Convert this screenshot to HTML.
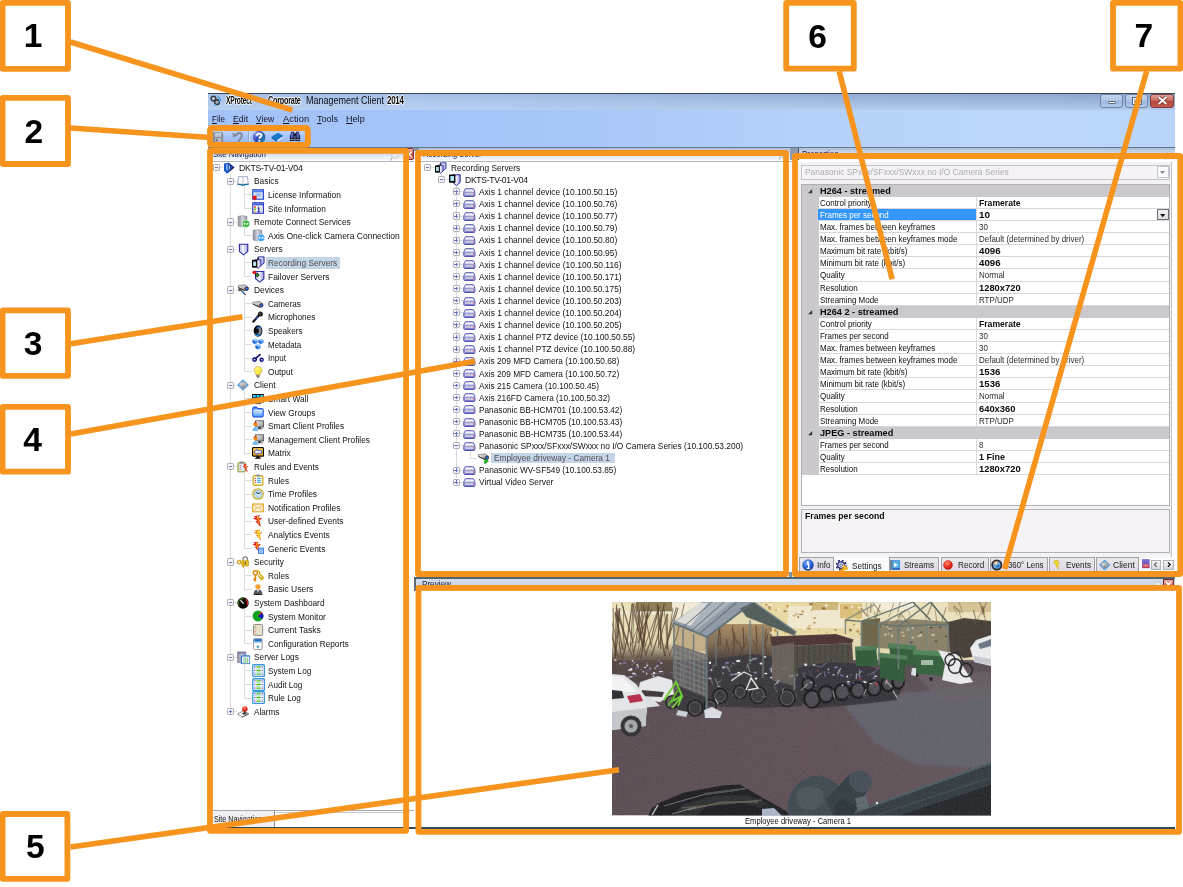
<!DOCTYPE html>
<html><head><meta charset="utf-8"><title>Management Client</title>
<style>

html,body{margin:0;padding:0;background:#fff;}
body{width:1183px;height:887px;position:relative;overflow:hidden;font-family:"Liberation Sans",sans-serif;}
.b{position:absolute;box-sizing:border-box;}
.t{position:absolute;white-space:pre;transform-origin:0 50%;font-family:"Liberation Sans",sans-serif;}
.i{position:absolute;overflow:visible;}
u{text-decoration:underline;text-underline-offset:1px;}
.sc{text-shadow:0 0 1px #fff,1px 0 0 #fff,-1px 0 0 #fff,0 1px 0 #fff,0 -1px 0 #fff;letter-spacing:-.3px}
.num{position:absolute;font:bold 33.6px "Liberation Sans",sans-serif;color:#000;line-height:34px;white-space:pre;}
#ov{position:absolute;left:0;top:0;}
</style></head>
<body>
<svg width="0" height="0" style="position:absolute"><defs><linearGradient id="gHelp" x1="0" y1=".2" x2="1" y2=".8"><stop offset="0" stop-color="#9486d8"/><stop offset=".45" stop-color="#2848c0"/><stop offset="1" stop-color="#148a9c"/></linearGradient>
<linearGradient id="gShield" x1="0" y1="0" x2="1" y2="0"><stop offset="0" stop-color="#b9b9e6"/><stop offset=".45" stop-color="#f4f4ff"/><stop offset="1" stop-color="#9c9cd8"/></linearGradient>
<linearGradient id="gSrv" x1="0" y1="0" x2="1" y2="0"><stop offset="0" stop-color="#8f8f9c"/><stop offset=".5" stop-color="#d8d8e0"/><stop offset="1" stop-color="#9a9aa6"/></linearGradient>
<radialGradient id="gBlueBall" cx=".4" cy=".3" r=".8"><stop offset="0" stop-color="#7fb2ff"/><stop offset=".6" stop-color="#1f55c8"/><stop offset="1" stop-color="#0b2f8a"/></radialGradient>
<radialGradient id="gRedBall" cx=".4" cy=".3" r=".8"><stop offset="0" stop-color="#ff8a6a"/><stop offset=".6" stop-color="#e8241a"/><stop offset="1" stop-color="#a01008"/></radialGradient>
<linearGradient id="gBulb" x1="0" y1="0" x2="1" y2="1"><stop offset="0" stop-color="#ffffa0"/><stop offset="1" stop-color="#f0d800"/></linearGradient>
<linearGradient id="gFolder" x1="0" y1="0" x2="0" y2="1"><stop offset="0" stop-color="#2a6ef0"/><stop offset=".5" stop-color="#b8dcff"/><stop offset="1" stop-color="#3a8af8"/></linearGradient>
<linearGradient id="gDev" x1="0" y1="0" x2="0" y2="1"><stop offset="0" stop-color="#fbfbff"/><stop offset="1" stop-color="#d2d2f0"/></linearGradient>
<linearGradient id="gMon" x1="0" y1="0" x2="1" y2="1"><stop offset="0" stop-color="#f4f4f4"/><stop offset="1" stop-color="#8a8a8a"/></linearGradient><symbol id="root" viewBox="0 0 12 12"><path d="M1 1.5 L6 .8 L6 10.5 L3.5 11.5 L1 8.5z" fill="#1a55d0"/><path d="M3 2.5 L4.8 2 L4.8 8.8 L3 8z" fill="#7db4ff"/><path d="M5.5 .5 L11.6 5.6 L5.5 10.6 L7.2 5.6z" fill="#0a1a50"/><path d="M6.6 2.6 L10 5.6 L6.8 8z" fill="#1c4ab8"/></symbol><symbol id="basics" viewBox="0 0 12 12"><path d="M.6 9.2 L1.6 1.6 Q4 1 6 2 Q8 1 10.4 1.6 L11.4 9.2 Q8.5 8.6 6 9.8 Q3.5 8.6 .6 9.2z" fill="#fff" stroke="#7a86b8" stroke-width=".7"/><path d="M.4 9.4 Q3.5 9 6 10.4 Q8.5 9 11.6 9.4" fill="none" stroke="#10709a" stroke-width="1.3"/><path d="M6 2 V10" stroke="#8a8ab0" stroke-width=".6"/></symbol><symbol id="license" viewBox="0 0 12 12"><rect x=".8" y=".8" width="10.6" height="9.4" fill="#e8f0ff" stroke="#2a48c8" stroke-width="1.2"/><rect x="1.4" y="1.4" width="9.4" height="2" fill="#4a7cf0"/><path d="M3.5 5.2h6M3.5 7h6" stroke="#6a90e0" stroke-width=".9"/><circle cx="2.6" cy="8.6" r="2.2" fill="#e01818"/><path d="M2 10 L2.6 11.8 L3.4 10z" fill="#c01010"/></symbol><symbol id="siteinfo" viewBox="0 0 12 12"><rect x=".8" y=".8" width="10.6" height="10.4" fill="#fff" stroke="#2a38b8" stroke-width="1.2"/><rect x="1.4" y="1.4" width="9.4" height="2" fill="#3a5ae0"/><path d="M6.4 4.6v1M5.6 6.4h1.2v3.2M5.4 9.8h2.4" stroke="#1a2a90" stroke-width="1.2" fill="none"/><circle cx="3" cy="5" r=".9" fill="#e03020"/><circle cx="3" cy="7.2" r=".9" fill="#30b030"/><circle cx="3" cy="9.4" r=".9" fill="#e8a820"/><path d="M9 4.5v6" stroke="#b8c4f0" stroke-width="1.2"/></symbol><symbol id="remote" viewBox="0 0 12 12"><path d="M1 1.2 Q5 .2 9 1.2 V10 Q5 11.4 1 10z" fill="url(#gSrv)" stroke="#7a7a88" stroke-width=".5"/><path d="M3.4 1.2V10.4M6.6 1.2V10.4" stroke="#a8a8b4" stroke-width=".5"/><circle cx="8.2" cy="8" r="3.4" fill="#36b43a" stroke="#e8ffe8" stroke-width=".6"/><path d="M5.8 8 l1.8 -1.3 v2.6z M10.6 8 l-1.8 -1.3 v2.6z" fill="#fff"/></symbol><symbol id="axisone" viewBox="0 0 12 12"><path d="M1 1.2 Q5 .2 9 1.2 V10 Q5 11.4 1 10z" fill="url(#gSrv)" stroke="#7a7a88" stroke-width=".5"/><path d="M3.4 1.2V10.4M6.6 1.2V10.4" stroke="#a8a8b4" stroke-width=".5"/><circle cx="8.2" cy="8" r="3.4" fill="#3aa0f0" stroke="#e8f4ff" stroke-width=".6"/><circle cx="6.9" cy="8" r=".9" fill="#fff"/><circle cx="9.5" cy="8" r=".9" fill="#fff"/></symbol><symbol id="servers" viewBox="0 0 12 12"><path d="M2.2 1.2 h7.6 v6.6 l-3.8 3 l-3.8 -3 z" fill="url(#gShield)" stroke="#2c2ca0" stroke-width="1"/></symbol><symbol id="recsrv" viewBox="0 0 12 12"><path d="M5.6 .8 h5.4 v5.6 l-2.7 2.2 l-2.7 -2.2z" fill="url(#gShield)" stroke="#2c2ca0" stroke-width=".9"/><path d="M3 3.4 h5.2 v5.4 l-2.6 2.4 l-2.6 -2.4z" fill="url(#gShield)" stroke="#2c2ca0" stroke-width=".9"/><rect x=".5" y="4.2" width="3.8" height="5.6" fill="#b8e4f8" stroke="#080808" stroke-width="1.1"/><path d="M.5 4.2h3.8M.5 9.8h3.8" stroke="#080808" stroke-width="1.4"/><rect x="4.6" y="1.6" width="1.6" height="1.6" fill="#222"/></symbol><symbol id="failover" viewBox="0 0 12 12"><path d="M3.2 1.4 h7.6 v6.6 l-3.8 3 l-3.8 -3 z" fill="url(#gShield)" stroke="#2c2ca0" stroke-width="1"/><path d="M2 .2 L4.2 2.2 L2 4.2 L-.2 2.2z" fill="#e81818"/><path d="M4.8 2.6 L7 4.6 L4.8 6.6 L2.6 4.6z" fill="#111"/><path d="M4.8 3.5 L6 4.6 L4.8 5.7 L3.6 4.6z" fill="#20d020"/></symbol><symbol id="cameras" viewBox="0 0 12 12"><g transform="translate(0,2.2)"><path d="M.6 2.2 L7.2 1.2 L11 3.6 L10.2 6.4 L7.6 7 L1 4z" fill="url(#gMon)" stroke="#55555c" stroke-width=".6"/><path d="M1 4 L7.6 7" stroke="#333" stroke-width="1"/><circle cx="9.3" cy="5.2" r="1.7" fill="#2a6ae0" stroke="#222" stroke-width=".7"/><circle cx="7" cy="5.6" r=".6" fill="#e03030"/></g></symbol><symbol id="devices" viewBox="0 0 12 12"><g transform="translate(.4,-.4)"><path d="M.6 2.2 L7.2 1.2 L11 3.6 L10.2 6.4 L7.6 7 L1 4z" fill="url(#gMon)" stroke="#55555c" stroke-width=".6"/><path d="M1 4 L7.6 7" stroke="#333" stroke-width="1"/><circle cx="9.3" cy="5.2" r="1.7" fill="#2a6ae0" stroke="#222" stroke-width=".7"/><circle cx="7" cy="5.6" r=".6" fill="#e03030"/></g><path d="M3 5 L8.6 11" stroke="#5a5a60" stroke-width="1.6"/><path d="M5 7.2 L7 9.4" stroke="#2a8ad8" stroke-width="1.4"/><circle cx="2.6" cy="5.6" r="1.6" fill="#555"/></symbol><symbol id="mic" viewBox="0 0 12 12"><path d="M1.4 10.6 L7.6 3.6" stroke="#111" stroke-width="2.2" stroke-linecap="round"/><path d="M3.6 8.2 L5.6 6" stroke="#2a4ad0" stroke-width="1.4"/><circle cx="8.4" cy="3" r="2.5" fill="#1a1a1a"/><circle cx="8" cy="2.6" r=".8" fill="#777"/></symbol><symbol id="speakers" viewBox="0 0 12 12"><ellipse cx="6" cy="6" rx="4.4" ry="5.8" fill="#0c0c10"/><ellipse cx="6.8" cy="6" rx="2.6" ry="4.4" fill="#1a6ad8"/><ellipse cx="7.6" cy="6" rx="1.8" ry="3.6" fill="#88888c"/><ellipse cx="5.4" cy="6" rx="1.5" ry="2.4" fill="#0a0a0a"/><path d="M2 8.4 Q4 11 7 11" stroke="#30c0f0" stroke-width="1" fill="none"/></symbol><symbol id="metadata" viewBox="0 0 12 12"><g transform="translate(.4,.4)"><path d="M0 1.3 L2.6 0 L5.2 1.3 L2.6 2.6z" fill="#9cd0ff"/><path d="M0 1.3 L2.6 2.6 V5.8 L0 4.4z" fill="#1e66d0"/><path d="M5.2 1.3 L2.6 2.6 V5.8 L5.2 4.4z" fill="#4a94ec"/></g><g transform="translate(6.4,.4)"><path d="M0 1.3 L2.6 0 L5.2 1.3 L2.6 2.6z" fill="#9cd0ff"/><path d="M0 1.3 L2.6 2.6 V5.8 L0 4.4z" fill="#1e66d0"/><path d="M5.2 1.3 L2.6 2.6 V5.8 L5.2 4.4z" fill="#4a94ec"/></g><g transform="translate(3.4,5.8)"><path d="M0 1.3 L2.6 0 L5.2 1.3 L2.6 2.6z" fill="#9cd0ff"/><path d="M0 1.3 L2.6 2.6 V5.8 L0 4.4z" fill="#1e66d0"/><path d="M5.2 1.3 L2.6 2.6 V5.8 L5.2 4.4z" fill="#4a94ec"/></g></symbol><symbol id="input" viewBox="0 0 12 12"><circle cx="2.6" cy="7.6" r="1.7" fill="none" stroke="#0a0a78" stroke-width="1.5"/><circle cx="9.6" cy="7.8" r="1.5" fill="none" stroke="#0a0a78" stroke-width="1.4"/><path d="M3.4 6.6 L8 2.6" stroke="#0a0a78" stroke-width="1.6" stroke-linecap="round"/></symbol><symbol id="output" viewBox="0 0 12 12"><path d="M6 .6 C2.8 .6 1.6 3 2.2 5 C2.8 6.6 3.8 7.2 4 8.8 H8 C8.2 7.2 9.2 6.6 9.8 5 C10.4 3 9.2 .6 6 .6z" fill="url(#gBulb)" stroke="#c8a868" stroke-width=".7"/><path d="M4.2 9.4h3.6M4.5 10.5h3" stroke="#6a6a6a" stroke-width=".9"/><path d="M5.2 11.4h1.6" stroke="#444" stroke-width=".8"/></symbol><symbol id="client" viewBox="0 0 12 12"><path d="M6 .2 L11.8 6 L6 11.8 L.2 6z" fill="#4a98e0"/><path d="M6 1.6 L10.4 6 L6 10.4 L1.6 6z" fill="#8cc4f4"/><rect x="2.8" y="3.4" width="6.4" height="4.2" rx=".6" fill="url(#gMon)" stroke="#8a8a90" stroke-width=".5"/><path d="M5.2 7.6h1.6v1.2h-1.6z" fill="#b06a5a"/><path d="M4 9h4" stroke="#888" stroke-width=".8"/></symbol><symbol id="smartwall" viewBox="0 0 12 12"><rect x=".2" y="1" width="11.6" height="8.6" fill="#0a0a0a"/><path d="M1 2h2.8v2.4H1zM4.6 2h2.8v2.4H4.6zM8.2 2H11v2.4H8.2zM1 5.4h2.8v2.6H1zM4.6 5.4h2.8v2.6H4.6zM8.2 5.4H11v2.6H8.2z" fill="#30c8f8"/><path d="M3 10.6h6" stroke="#444" stroke-width="1"/></symbol><symbol id="viewgroups" viewBox="0 0 12 12"><path d="M.8 2.4 Q.8 1 2.2 1 H4.6 L5.8 2.6 H10.4 Q11.2 2.6 11.2 3.6 V10 Q11.2 11 10.2 11 H1.8 Q.8 11 .8 10z" fill="url(#gFolder)" stroke="#1a44d8" stroke-width="1"/><path d="M1.6 5 Q4 3.2 6.4 4.4 L10.4 4.4" stroke="#fff" stroke-width=".9" fill="none"/></symbol><symbol id="profile" viewBox="0 0 12 12"><rect x="3.6" y=".8" width="8" height="6.2" fill="url(#gMon)" stroke="#4a4a4a" stroke-width=".8"/><path d="M6.4 7h2.4v1.4h2v.9H5.6z" fill="#3a3a3a"/><circle cx="3.4" cy="4.4" r="2.1" fill="#f08a20"/><path d="M2 2.8 Q3.4 1.2 5 2.8 L4.4 3.6 H2.4z" fill="#c84a10"/><path d="M.4 11 Q.4 7 3.4 7 Q6.4 7 6.4 11z" fill="#6ab4f0" stroke="#d8ecff" stroke-width=".5"/></symbol><symbol id="matrix" viewBox="0 0 12 12"><rect x=".5" y=".6" width="11" height="8.6" rx="1" fill="#f0a820" stroke="#0a0a0a" stroke-width="1.2"/><rect x="1.2" y="1.2" width="9.6" height="3" fill="#f8d060" opacity=".8"/><path d="M2 4.9 L5.2 2.2 V3.6 H9.6 V6.2 H5.2 V7.6z" fill="#fff" stroke="#2a48d0" stroke-width=".8"/><path d="M2.6 11.8 L5 9.4 H7 L9.4 11.8z" fill="#0a0a0a"/><path d="M6.6 11.8 l1 -1.4 l1 1.4z" fill="#e02020"/></symbol><symbol id="rulesevents" viewBox="0 0 12 12"><rect x=".8" y="1.6" width="7.8" height="9.4" rx=".8" fill="#b8b860" stroke="#8a9a40" stroke-width=".7"/><rect x="1.8" y="2.6" width="5.8" height="7.4" fill="#d8ecf8"/><rect x="3" y=".6" width="3.4" height="1.8" rx=".5" fill="#8888a0"/><path d="M3.2 4v5" stroke="#e04040" stroke-width="1" stroke-dasharray="1 .8"/><path d="M6.2 2.8 L9.8 3.6 L8.6 5 L11.4 5.6 L9.4 7 L11 11.4 L7.4 7.6 L8.8 7 L5.6 5.4 L7.4 4.6z" fill="#e82818"/><path d="M8 4.6 L9.6 6.6 L9 7.4" stroke="#ffb020" stroke-width=".8" fill="none"/></symbol><symbol id="rules" viewBox="0 0 12 12"><rect x="1" y="1.6" width="10" height="9.8" rx="1" fill="#e8d040" stroke="#b8a020" stroke-width=".8"/><rect x="2.2" y="2.8" width="7.6" height="7.4" fill="#fff"/><rect x="4.2" y=".4" width="3.6" height="2" rx=".6" fill="#9090a8"/><path d="M3.4 4v5.4" stroke="#e03030" stroke-width="1.1" stroke-dasharray="1.1 .9"/><path d="M5.2 4.4h3.6M5.2 6.4h3.6M5.2 8.4h3.6" stroke="#40a8e0" stroke-width="1.1"/></symbol><symbol id="time" viewBox="0 0 12 12"><circle cx="6" cy="6" r="5.2" fill="#b8dcf8" stroke="#c8a820" stroke-width="1.3"/><circle cx="6" cy="6" r="4.4" fill="none" stroke="#f0e080" stroke-width=".5"/><path d="M6 6 L4 3.6 M6 6 L8.4 4.6" stroke="#222" stroke-width=".9"/><path d="M6 2v.8M6 9.2v.8M2 6h.8M9.2 6h.8" stroke="#4060c0" stroke-width=".7"/><path d="M6 6 L6.8 8.6" stroke="#fff" stroke-width=".8"/></symbol><symbol id="notif" viewBox="0 0 12 12"><rect x=".6" y="2" width="10.8" height="7.8" fill="#fdf0d0" stroke="#e0a830" stroke-width="1.1"/><path d="M.8 2.2 L6 6.4 L11.2 2.2 M.8 9.6 L4.4 5.6 M11.2 9.6 L7.6 5.6" stroke="#e8b040" stroke-width=".9" fill="none"/></symbol><symbol id="userevents" viewBox="0 0 12 12"><path d="M1.6 1.2 L8 .2 L6.4 2.9 L10.2 3.1 L7.4 5.6 L8.8 12 L3.4 6.2 L5.6 5.3 L.8 3.5 L3.8 2.6z" fill="#d81010"/><path d="M4.6 1.8 L6.2 1.6 L5 3.6 L7.4 4 L5.8 5.4 L7 8.6" stroke="#ffc820" stroke-width="1" fill="none"/></symbol><symbol id="analytics" viewBox="0 0 12 12"><g transform="translate(.8,.4) scale(.95)"><path d="M1.6 1.2 L8 .2 L6.4 2.9 L10.2 3.1 L7.4 5.6 L8.8 12 L3.4 6.2 L5.6 5.3 L.8 3.5 L3.8 2.6z" fill="#f08010"/><path d="M4.6 1.8 L6.2 1.6 L5 3.6 L7.4 4 L5.8 5.4 L7 9.4" stroke="#ffe040" stroke-width="1.3" fill="none"/></g></symbol><symbol id="generic" viewBox="0 0 12 12"><g transform="translate(-.4,-.6) scale(.92)"><path d="M1.6 1.2 L8 .2 L6.4 2.9 L10.2 3.1 L7.4 5.6 L8.8 12 L3.4 6.2 L5.6 5.3 L.8 3.5 L3.8 2.6z" fill="#d81010"/><path d="M4.6 1.8 L6.2 1.6 L5 3.6 L7.4 4 L5.8 5.4 L7 8.6" stroke="#ffc820" stroke-width="1" fill="none"/></g><rect x="6.6" y="6.2" width="5" height="5.6" fill="#b8dcff" stroke="#2a78e0" stroke-width="1"/><path d="M8.4 7v4M9.8 7v4" stroke="#5a9af0" stroke-width=".7"/></symbol><symbol id="security" viewBox="0 0 12 12"><path d="M6 4.6 V3.2 Q6 .8 8.2 .8 Q10.4 .8 10.4 3.2 V4.6" fill="none" stroke="#6a6a6a" stroke-width="1.1"/><path d="M6.6 4.6 V3.4 Q6.6 1.8 8.2 1.8 Q9.8 1.8 9.8 3.4 V4.6" fill="none" stroke="#d8d8d8" stroke-width=".6"/><rect x="4.8" y="4.4" width="6.8" height="5.6" rx=".6" fill="#e8c020" stroke="#b89010" stroke-width=".6"/><rect x="7.8" y="5.8" width="1" height="2.6" fill="#4a4a80"/><circle cx="2.2" cy="6.2" r="1.7" fill="none" stroke="#d8a810" stroke-width="1.3"/><path d="M3.8 6.4 H7.4 M6 6.4 V8.4 M7 6.4 V9.6" stroke="#d8a810" stroke-width="1.2"/><path d="M5.6 10 L6.8 11.6" stroke="#c89810" stroke-width="1.2"/></symbol><symbol id="roles" viewBox="0 0 12 12"><circle cx="3.4" cy="2.8" r="2.1" fill="none" stroke="#e08a10" stroke-width="1.5"/><path d="M3.4 4.8 V11.4 M3.4 8.6 H1.6 M3.4 10.4 H1.8" stroke="#e08a10" stroke-width="1.6"/><path d="M5 1.2 Q8 .6 7.6 3.8 L11.4 7.6 L10.6 9 L9.4 8.2 L9 9 L6.2 5.2" fill="none" stroke="#d8b020" stroke-width="1.5"/></symbol><symbol id="users" viewBox="0 0 12 12"><circle cx="6" cy="3.6" r="2.7" fill="#f8a028"/><path d="M3.6 2.6 Q6 -.4 8.4 2.6 Q6 1.6 3.6 2.6z" fill="#d0d0d0"/><path d="M1.6 11.4 Q1.6 6.4 6 6.4 Q10.4 6.4 10.4 11.4z" fill="#58585c"/><path d="M4.8 6.6 L6 9.6 L7.2 6.6z" fill="#e8e8e8"/><ellipse cx="6" cy="11.4" rx="4.6" ry=".6" fill="#222"/></symbol><symbol id="dashboard" viewBox="0 0 12 12"><circle cx="6" cy="6" r="5.7" fill="#050505"/><path d="M2 8.6 A4.4 4.4 0 0 1 6.6 1.7" fill="none" stroke="#58a018" stroke-width="1"/><path d="M8.2 2.2 A4.4 4.4 0 0 1 10 8.4" fill="none" stroke="#e01818" stroke-width="1.1"/><path d="M6.6 6.6 L3.4 3.2" stroke="#fff" stroke-width="1.2"/></symbol><symbol id="sysmon" viewBox="0 0 12 12"><circle cx="6" cy="6" r="5.4" fill="#10a020"/><path d="M6 6 L10.4 2.9 A5.4 5.4 0 0 1 10.4 9.1z" fill="#1818c0"/><path d="M6 6 L9.2 1.7 A5.4 5.4 0 0 1 10.4 2.9z" fill="#e01818"/></symbol><symbol id="tasks" viewBox="0 0 12 12"><rect x="1.6" y=".6" width="9" height="10.8" rx=".8" fill="#f4ecd8" stroke="#787878" stroke-width=".9"/><path d="M2.2 3h7.8M2.2 5h7.8M2.2 7h7.8M2.2 9h7.8M4.6 1v10M7.4 1v10" stroke="#d8ccb0" stroke-width=".5"/><path d="M3.2 2v2" stroke="#60c060" stroke-width=".9"/><path d="M3.2 5.2v5" stroke="#e86060" stroke-width=".9" stroke-dasharray=".9 .9"/></symbol><symbol id="config" viewBox="0 0 12 12"><rect x="1.6" y=".6" width="8.6" height="10.8" rx=".8" fill="#fff" stroke="#909090" stroke-width=".9"/><rect x="2.2" y="1.1" width="7.4" height="2.6" fill="#1a6ac8"/><rect x="2.2" y="3.7" width="7.4" height="1.4" fill="#a8d0f0"/><path d="M5.9 7.4v2.6M4.6 8.7h2.6" stroke="#2a7ad8" stroke-width="1"/></symbol><symbol id="serverlogs" viewBox="0 0 12 12"><path d="M.6 .8 H8 V10.4 H.6z" fill="url(#gSrv)" stroke="#6a6a8a" stroke-width=".6"/><path d="M.6 .8 H8 V2.4 H.6z" fill="#7a7aa8"/><path d="M3 .8v9.6M5.6 .8v9.6" stroke="#9a9ab0" stroke-width=".5"/><path d="M4 5.4 Q4 4.4 5 4.4 H10.8 Q11.8 4.4 11.8 5.4 V11.6 H4z" fill="#e8f0ff" stroke="#2a78d8" stroke-width="1"/><path d="M6.4 6v5.4M8 6v5.4M9.6 6v5.4" stroke="#88c888" stroke-width=".9"/></symbol><symbol id="log" viewBox="0 0 12 12"><rect x=".7" y=".7" width="10.6" height="10.6" rx=".8" fill="#fff" stroke="#3a98d8" stroke-width="1.2"/><path d="M1.2 4.2h9.6M1.2 7.6h9.6" stroke="#9ad0f0" stroke-width=".6"/><path d="M4 2.6h4M4 5.9h4M4 9.2h4" stroke="#48b818" stroke-width="1.3"/><path d="M2 2.6h1.2M8.8 2.6H10M2 5.9h1.2M8.8 5.9H10M2 9.2h1.2M8.8 9.2H10" stroke="#8848c8" stroke-width="1.1"/></symbol><symbol id="alarms" viewBox="0 0 12 12"><path d="M.4 8 L6 5 L11.6 7.4 L5 11z" fill="#f8f8f8" stroke="#6a6a6a" stroke-width=".7"/><path d="M5 11 L11.6 7.4 V8.4 L5 11.8z" fill="#555"/><ellipse cx="7.4" cy="7.4" rx="2.2" ry="1" fill="#333"/><rect x="7" y="4.6" width="1.2" height="3" fill="#222"/><circle cx="7.8" cy="3" r="2.8" fill="url(#gRedBall)"/><circle cx="7.8" cy="2.2" r=".8" fill="#f88" opacity=".8"/></symbol><symbol id="srv1" viewBox="0 0 12 12"><path d="M3.8 .8 h7.4 v7.6 l-3.7 3 l-3.7 -3z" fill="url(#gShield)" stroke="#2c2ca0" stroke-width="1"/><rect x=".7" y="1.4" width="5" height="6.4" fill="#b8e8fc" stroke="#050505" stroke-width="1.3"/><path d="M.2 1.4h6M.2 7.8h6" stroke="#050505" stroke-width="1.3"/></symbol><symbol id="device" viewBox="0 0 13 10"><path d="M2.6 .8 H10.4 Q11.4 .8 11.9 2.6 L12.6 4.8 V8 Q12.6 9.2 11.4 9.2 H1.6 Q.4 9.2 .4 8 V4.8 L1.1 2.6 Q1.6 .8 2.6 .8z" fill="url(#gDev)" stroke="#3c3ca4" stroke-width="1"/><rect x="1.4" y="4.6" width="10.2" height="3.6" rx=".6" fill="#e6e6f8" stroke="#4a4ab4" stroke-width=".7"/><path d="M2.6 6.4h6.6" stroke="#a4a4b4" stroke-width="1.2" stroke-dasharray="1.6 .5"/><circle cx="10.6" cy="6.4" r=".7" fill="#f04040"/></symbol><symbol id="camplay" viewBox="0 0 13 12"><g transform="translate(.6,.6)"><path d="M.6 2.2 L7.2 1.2 L11 3.6 L10.2 6.4 L7.6 7 L1 4z" fill="url(#gMon)" stroke="#55555c" stroke-width=".6"/><path d="M1 4 L7.6 7" stroke="#333" stroke-width="1"/><circle cx="9.3" cy="5.2" r="1.7" fill="#2a6ae0" stroke="#222" stroke-width=".7"/><circle cx="7" cy="5.6" r=".6" fill="#e03030"/></g><path d="M7.6 6.4 L11.4 9.2 L7.6 12z" fill="#18c018" stroke="#0a700a" stroke-width=".5"/></symbol><symbol id="tinfo" viewBox="0 0 12 12"><circle cx="6" cy="6" r="5.7" fill="url(#gBlueBall)"/><circle cx="6" cy="3" r="1" fill="#fff"/><path d="M4.8 5h1.9v4M4.6 9.4h3.2" stroke="#fff" stroke-width="1.3" fill="none"/></symbol><symbol id="tsettings" viewBox="0 0 12 12"><g transform="translate(-.6,-.8) scale(1.1)"><circle cx="5" cy="5.4" r="3" fill="#fff" stroke="#2c2c78" stroke-width="1.3"/><circle cx="5" cy="5.4" r="4.3" fill="none" stroke="#2c2c78" stroke-width="1.6" stroke-dasharray="1.75 1.63"/><circle cx="5" cy="5.4" r="1.2" fill="#fff" stroke="#2c2c78" stroke-width=".7"/><path d="M4.4 11 L8.6 7.6" stroke="#e8a818" stroke-width="2.4" stroke-linecap="round"/><path d="M8.2 4.8 A2.6 2.6 0 1 0 11.8 6.8 L10 7.6 L9 6.2z" fill="#f0b828"/></g></symbol><symbol id="tstreams" viewBox="0 0 12 12"><rect x=".4" y=".4" width="11.2" height="11.2" fill="#3a8ad0"/><rect x=".4" y=".4" width="2.4" height="11.2" fill="#6a7a8a"/><rect x="3" y="1" width="8" height="10" fill="#58b0e8"/><path d="M4.6 3.4 L9 6 L4.6 8.6z" fill="#fff"/><rect x="3" y="9.4" width="8.4" height="2" fill="#2a6ab8"/></symbol><symbol id="trecord" viewBox="0 0 12 12"><circle cx="6" cy="6" r="5.4" fill="url(#gRedBall)" stroke="#b02010" stroke-width=".5"/></symbol><symbol id="tlens" viewBox="0 0 12 12"><circle cx="6" cy="6" r="5.7" fill="#2a2a30"/><circle cx="6" cy="6" r="3.9" fill="#6aa8e0"/><path d="M6 6 L2.4 4.4 A3.9 3.9 0 0 1 7 2.2z" fill="#f0a040"/><path d="M6 6 L3.4 4 L6.4 3z" fill="#fff" opacity=".85"/><circle cx="7.2" cy="7.4" r="1.8" fill="#3a78c8"/></symbol><symbol id="tevents" viewBox="0 0 12 12"><path d="M2.4 .6 L8.2 .2 L6.6 3 L10 3.4 L7.2 5.6 L8.4 11.6 L4.4 6 L6 5.4 L1.6 3.2 L4 2.4z" fill="#f8e020" stroke="#c8a010" stroke-width=".6"/></symbol><symbol id="tgrid" viewBox="0 0 10 12"><rect x=".2" y=".2" width="9.6" height="11.6" fill="#5a4ac8"/><rect x=".8" y="6.4" width="8.4" height="4.8" fill="#d03a48"/><path d="M2.4 1v8M5 1v8M7.6 1v8" stroke="#fff" stroke-width=".7" stroke-dasharray="1 .8"/><path d="M3 8.6h4" stroke="#fff" stroke-width=".8"/></symbol><symbol id="save" viewBox="0 0 12 12"><path d="M.5 .5 H10.4 L11.5 1.6 V11.5 H.5z" fill="#8e9098" stroke="#74767e" stroke-width=".6"/><rect x="2.2" y=".9" width="7.4" height="4.6" fill="#c4cede"/><path d="M2.2 2.4h7.4M2.2 3.9h7.4" stroke="#aab6ca" stroke-width=".5"/><rect x="2.6" y="7.2" width="6.8" height="4.2" fill="#b9bfcc"/><rect x="3.4" y="8" width="2" height="2.8" fill="#70727c"/></symbol><symbol id="undo" viewBox="0 0 12 12"><path d="M.4 1.4 L1.2 7.2 L6.2 5z" fill="#888c98"/><path d="M3.4 4.8 Q7.6 .4 10.2 3.2 Q12 6 6.6 11.6" fill="none" stroke="#888c98" stroke-width="2.5"/></symbol><symbol id="help" viewBox="0 0 12 12"><circle cx="6" cy="6" r="5.7" fill="url(#gHelp)" stroke="#20308a" stroke-width=".5"/><ellipse cx="5.4" cy="3.4" rx="3.8" ry="2.4" fill="#fff" opacity=".28"/><path d="M3.8 4.7 Q3.8 2.5 6 2.5 Q8.3 2.5 8.3 4.4 Q8.3 5.6 6.9 6.2 Q6.1 6.6 6.1 7.5" fill="none" stroke="#fff" stroke-width="1.7"/><circle cx="6.1" cy="9.5" r="1" fill="#fff"/></symbol><symbol id="book" viewBox="0 0 14 12"><path d="M.4 5 L7.4 .8 L13.4 4.4 L6.4 9z" fill="#1878c8"/><path d="M.4 5 L6.4 9 V11 L.4 6.8z" fill="#0a58a0"/><path d="M6.4 9 L13.4 4.4 V6.4 L6.4 11z" fill="#e8f0f8" stroke="#8ab0d0" stroke-width=".4"/></symbol><symbol id="binoc" viewBox="0 0 12 12"><path d="M2 .8 H4.8 L5.6 4 V11 H.4 V6.4z" fill="#0c0c20"/><path d="M7.2 .8 H10 L11.6 6.4 V11 H6.4 V4z" fill="#0c0c20"/><rect x="4.6" y="2.6" width="2.8" height="3" fill="#15153a"/><path d="M2.9 1.6 L2 8 M9.1 1.6 L10 8" stroke="#5a62e0" stroke-width="1.5"/><path d="M3.8 1.6 L3.6 7.6 M8.2 1.6 L8.4 7.6" stroke="#a8b4ff" stroke-width=".7"/><path d="M.8 9.4h4.4M6.8 9.4h4.4" stroke="#e8ecff" stroke-width=".7"/></symbol><symbol id="gears" viewBox="0 0 12 12"><circle cx="3.8" cy="3.8" r="2.5" fill="#b8d8f0" stroke="#3a3a3a" stroke-width="1.7"/><circle cx="7.6" cy="7.8" r="2.5" fill="#b0b8c0" stroke="#3a3a3a" stroke-width="1.7"/><path d="M8.4 1.6 L11.8 5 L8.6 8 M6.6 9.8 L5.2 11.4" stroke="#3a9ae8" stroke-width="1.3" fill="none"/></symbol><symbol id="pin" viewBox="0 0 10 10"><ellipse cx="5" cy="4" rx="3.8" ry="3" fill="#e8e8ec" stroke="#b0b4bc" stroke-width=".6"/><path d="M1.6 6.4 L.2 9.6" stroke="#a0a4ac" stroke-width="1.1"/></symbol></defs></svg>
<div class="b" style="left:208.00px;top:93.00px;width:967.00px;height:54.50px;background:linear-gradient(90deg,#a4c3f8 0%,#a4c3f8 22%,#a9c7f8 40%,#b3d0fa 60%,#bcd7fb 82%,#bad5fb 100%);"></div>
<div class="b" style="left:208.00px;top:93.00px;width:967.00px;height:17.00px;background:linear-gradient(180deg,#a3bfe8 0%,#adc7ec 40%,#b9d0f0 100%);"></div>
<div class="b" style="left:408.00px;top:93.00px;width:767.00px;height:17.00px;background:linear-gradient(90deg,rgba(130,155,195,0),rgba(130,155,195,.55) 60%,rgba(125,150,190,.7));-webkit-mask-image:linear-gradient(180deg,#000,rgba(0,0,0,.15));mask-image:linear-gradient(180deg,#000,rgba(0,0,0,.15))"></div>
<div class="b" style="left:208.00px;top:93.00px;width:967.00px;height:1.00px;background:#3b4656;"></div>
<div class="b" style="left:1100.20px;top:94.20px;width:23.00px;height:13.40px;background:linear-gradient(180deg,#c4d5ee 0%,#adc3e4 48%,#9fb8de 52%,#b0c8ea 100%);border:1px solid #6f86a8;border-radius:3px;"></div>
<div class="b" style="left:1125.40px;top:94.20px;width:23.00px;height:13.40px;background:linear-gradient(180deg,#c4d5ee 0%,#adc3e4 48%,#9fb8de 52%,#b0c8ea 100%);border:1px solid #6f86a8;border-radius:3px;"></div>
<div class="b" style="left:1150.40px;top:94.20px;width:23.40px;height:13.40px;background:linear-gradient(180deg,#dda198 0%,#cc6a5e 45%,#b8463a 50%,#c4584c 100%);border:1px solid #7a4040;border-radius:3px;"></div>
<div class="b" style="left:1108.00px;top:100.60px;width:7.60px;height:3.00px;background:#fff;border:1px solid #5a6a84;border-radius:1px"></div>
<div class="b" style="left:1133.00px;top:97.60px;width:8.00px;height:6.60px;background:transparent;border:1.6px solid #f4f7fb;outline:1px solid #5a6a84"></div>
<svg class="i" style="left:1156.6px;top:96.4px" width="11" height="9" viewBox="0 0 11 9"><path d="M1.6 1 L9.4 8 M9.4 1 L1.6 8" stroke="#6a2a26" stroke-width="3.2"/><path d="M1.6 1 L9.4 8 M9.4 1 L1.6 8" stroke="#fff" stroke-width="1.9"/></svg>
<svg class="i" style="left:210.00px;top:95.20px" width="11" height="11"><use href="#gears"/></svg>
<div class="t sc" style="left:225.80px;top:95.30px;font-size:10.2px;line-height:12px;transform:scaleX(0.6491);color:#000;font-weight:bold;">XProtect</div>
<div class="t sc" style="left:268.00px;top:95.30px;font-size:10.2px;line-height:12px;transform:scaleX(0.7107);color:#000;font-weight:bold;">Corporate</div>
<div class="t " style="left:306.40px;top:95.30px;font-size:10.2px;line-height:12px;transform:scaleX(0.8840);color:#0c0c14;">Management Client</div>
<div class="t sc" style="left:387.40px;top:95.30px;font-size:10.2px;line-height:12px;transform:scaleX(0.7763);color:#000;font-weight:bold;">2014</div>
<div class="t " style="left:212.00px;top:112.50px;font-size:9.8px;line-height:12px;transform:scaleX(0.8229);color:#141424;"><u>F</u>ile</div>
<div class="t " style="left:232.90px;top:112.50px;font-size:9.8px;line-height:12px;transform:scaleX(0.8940);color:#141424;"><u>E</u>dit</div>
<div class="t " style="left:255.60px;top:112.50px;font-size:9.8px;line-height:12px;transform:scaleX(0.8641);color:#141424;"><u>V</u>iew</div>
<div class="t " style="left:282.70px;top:112.50px;font-size:9.8px;line-height:12px;transform:scaleX(0.9583);color:#141424;"><u>A</u>ction</div>
<div class="t " style="left:317.00px;top:112.50px;font-size:9.8px;line-height:12px;transform:scaleX(0.9180);color:#141424;"><u>T</u>ools</div>
<div class="t " style="left:346.30px;top:112.50px;font-size:9.8px;line-height:12px;transform:scaleX(0.9278);color:#141424;"><u>H</u>elp</div>
<div class="b" style="left:208.00px;top:130.60px;width:100.00px;height:11.80px;background:linear-gradient(180deg,rgba(255,255,255,.28),rgba(255,255,255,0) 60%,rgba(120,150,220,.18));"></div>
<svg class="i" style="left:213.40px;top:131.60px" width="10.4" height="10.4"><use href="#save"/></svg>
<svg class="i" style="left:231.60px;top:131.40px" width="11" height="11"><use href="#undo"/></svg>
<div class="b" style="left:247.60px;top:131.00px;width:1.00px;height:11.00px;background:#8fa6cf;"></div>
<div class="b" style="left:248.60px;top:131.00px;width:1.00px;height:11.00px;background:#d6e4fb;"></div>
<svg class="i" style="left:252.80px;top:131.00px" width="12.4" height="12.4"><use href="#help"/></svg>
<svg class="i" style="left:270.80px;top:132.40px" width="13.4" height="11"><use href="#book"/></svg>
<svg class="i" style="left:289.40px;top:131.40px" width="12" height="11"><use href="#binoc"/></svg>
<div class="b" style="left:208.00px;top:147.00px;width:967.00px;height:1.20px;background:#65758a;"></div>
<div class="b" style="left:208.00px;top:148.20px;width:967.00px;height:680.80px;background:#fff;"></div>
<div class="b" style="left:208.00px;top:148.20px;width:206.00px;height:12.30px;background:linear-gradient(180deg,#aec0d8 0%,#c6d5e7 35%,#e4ebf4 70%,#f3f6fa 100%);"></div>
<div class="b" style="left:208.00px;top:160.50px;width:206.00px;height:1.00px;background:#b2b6c2;"></div>
<div class="t " style="left:213.00px;top:147.90px;font-size:9.4px;line-height:12px;transform:scaleX(0.8404);color:#1a1a3a;">Site Navigation</div>
<svg class="i" style="left:390.00px;top:152.00px" width="10" height="9"><use href="#pin"/></svg>
<div class="b" style="left:403.50px;top:148.40px;width:10.30px;height:11.40px;background:linear-gradient(180deg,#eab4ac,#cf4c3c 55%,#e08a80);border:1px solid #7a2a38;border-radius:1.5px"></div>
<svg class="i" style="left:405.6px;top:151px" width="6.4" height="6.4" viewBox="0 0 7 7"><path d="M.8 .8L6.2 6.2M6.2 .8L.8 6.2" stroke="#fff" stroke-width="1.6"/></svg>
<div class="b" style="left:414.00px;top:148.20px;width:5.00px;height:12.30px;background:linear-gradient(180deg,#7e8fa6 0,#8b9bb0 2.5px,#e4e9f0 3px,#f2f4f8 100%);"></div>
<div class="b" style="left:419.00px;top:148.20px;width:373.00px;height:12.30px;background:linear-gradient(180deg,#aec0d8 0%,#c6d5e7 35%,#e4ebf4 70%,#f3f6fa 100%);"></div>
<div class="b" style="left:419.00px;top:160.50px;width:373.00px;height:1.00px;background:#b2b6c2;"></div>
<div class="t " style="left:422.50px;top:147.60px;font-size:9.4px;line-height:12px;transform:scaleX(0.8019);color:#1a1a3a;">Recording Server</div>
<svg class="i" style="left:779.00px;top:150.50px" width="9" height="9"><use href="#pin"/></svg>
<div class="b" style="left:789.50px;top:148.20px;width:8.40px;height:12.30px;background:#8b9bb0;"></div>
<div class="b" style="left:797.90px;top:148.20px;width:377.00px;height:12.30px;background:linear-gradient(180deg,#aec0d8 0%,#c6d5e7 35%,#e4ebf4 70%,#f3f6fa 100%);border-left:1px solid #4a5668"></div>
<div class="t " style="left:801.50px;top:147.80px;font-size:9.4px;line-height:12px;transform:scaleX(0.8541);color:#1a1a3a;">Properties</div>
<svg class="i" style="left:1165.00px;top:150.50px" width="9" height="9"><use href="#pin"/></svg>
<div class="b" style="left:229.80px;top:173.60px;width:1.00px;height:534.00px;background:#dcdce0;"></div>
<div class="b" style="left:243.80px;top:187.20px;width:1.00px;height:21.20px;background:#dcdce0;"></div>
<div class="b" style="left:243.80px;top:228.00px;width:1.00px;height:7.60px;background:#dcdce0;"></div>
<div class="b" style="left:243.80px;top:255.20px;width:1.00px;height:21.20px;background:#dcdce0;"></div>
<div class="b" style="left:243.80px;top:296.00px;width:1.00px;height:75.60px;background:#dcdce0;"></div>
<div class="b" style="left:243.80px;top:391.20px;width:1.00px;height:62.00px;background:#dcdce0;"></div>
<div class="b" style="left:243.80px;top:472.80px;width:1.00px;height:75.60px;background:#dcdce0;"></div>
<div class="b" style="left:243.80px;top:568.00px;width:1.00px;height:21.20px;background:#dcdce0;"></div>
<div class="b" style="left:243.80px;top:608.80px;width:1.00px;height:34.80px;background:#dcdce0;"></div>
<div class="b" style="left:243.80px;top:663.20px;width:1.00px;height:34.80px;background:#dcdce0;"></div>
<div class="b" style="left:220.00px;top:167.10px;width:3.40px;height:1.00px;background:#dcdce0;"></div>
<div class="b" style="left:212.80px;top:164.00px;width:7.20px;height:7.20px;background:linear-gradient(135deg,#fff,#e8e8ee);border:1px solid #aeaeb8;border-radius:1.2px"></div>
<div class="b" style="left:214.60px;top:167.10px;width:3.60px;height:1.00px;background:#6876c0;"></div>
<svg class="i" style="left:223.40px;top:161.60px" width="12" height="12"><use href="#root"/></svg>
<div class="t sc" style="left:239.20px;top:161.80px;font-size:9.2px;line-height:12px;transform:scaleX(0.9429);color:#111;">DKTS-TV-01-V04</div>
<div class="b" style="left:234.00px;top:180.70px;width:3.40px;height:1.00px;background:#dcdce0;"></div>
<div class="b" style="left:226.70px;top:177.60px;width:7.20px;height:7.20px;background:linear-gradient(135deg,#fff,#e8e8ee);border:1px solid #aeaeb8;border-radius:1.2px"></div>
<div class="b" style="left:228.50px;top:180.70px;width:3.60px;height:1.00px;background:#6876c0;"></div>
<svg class="i" style="left:237.40px;top:175.20px" width="12" height="12"><use href="#basics"/></svg>
<div class="t " style="left:253.50px;top:175.40px;font-size:9.2px;line-height:12px;transform:scaleX(0.9090);color:#121212;">Basics</div>
<div class="b" style="left:244.30px;top:194.30px;width:7.30px;height:1.00px;background:#dcdce0;"></div>
<svg class="i" style="left:252.00px;top:188.80px" width="12" height="12"><use href="#license"/></svg>
<div class="t " style="left:267.90px;top:189.00px;font-size:9.2px;line-height:12px;transform:scaleX(0.9091);color:#121212;">License Information</div>
<div class="b" style="left:244.30px;top:207.90px;width:7.30px;height:1.00px;background:#dcdce0;"></div>
<svg class="i" style="left:252.00px;top:202.40px" width="12" height="12"><use href="#siteinfo"/></svg>
<div class="t " style="left:267.90px;top:202.60px;font-size:9.2px;line-height:12px;transform:scaleX(0.8981);color:#121212;">Site Information</div>
<div class="b" style="left:234.00px;top:221.50px;width:3.40px;height:1.00px;background:#dcdce0;"></div>
<div class="b" style="left:226.70px;top:218.40px;width:7.20px;height:7.20px;background:linear-gradient(135deg,#fff,#e8e8ee);border:1px solid #aeaeb8;border-radius:1.2px"></div>
<div class="b" style="left:228.50px;top:221.50px;width:3.60px;height:1.00px;background:#6876c0;"></div>
<svg class="i" style="left:236.90px;top:215.40px" width="13.2" height="13.2"><use href="#remote"/></svg>
<div class="t " style="left:253.50px;top:216.20px;font-size:9.2px;line-height:12px;transform:scaleX(0.9060);color:#121212;">Remote Connect Services</div>
<div class="b" style="left:244.30px;top:235.10px;width:7.30px;height:1.00px;background:#dcdce0;"></div>
<svg class="i" style="left:251.50px;top:229.00px" width="13.2" height="13.2"><use href="#axisone"/></svg>
<div class="t " style="left:267.90px;top:229.80px;font-size:9.2px;line-height:12px;transform:scaleX(0.9251);color:#121212;">Axis One-click Camera Connection</div>
<div class="b" style="left:234.00px;top:248.70px;width:3.40px;height:1.00px;background:#dcdce0;"></div>
<div class="b" style="left:226.70px;top:245.60px;width:7.20px;height:7.20px;background:linear-gradient(135deg,#fff,#e8e8ee);border:1px solid #aeaeb8;border-radius:1.2px"></div>
<div class="b" style="left:228.50px;top:248.70px;width:3.60px;height:1.00px;background:#6876c0;"></div>
<svg class="i" style="left:236.90px;top:242.60px" width="13.2" height="13.2"><use href="#servers"/></svg>
<div class="t " style="left:253.50px;top:243.40px;font-size:9.2px;line-height:12px;transform:scaleX(0.9066);color:#121212;">Servers</div>
<div class="b" style="left:244.30px;top:262.30px;width:7.30px;height:1.00px;background:#dcdce0;"></div>
<svg class="i" style="left:251.50px;top:256.20px" width="13.2" height="13.2"><use href="#recsrv"/></svg>
<div class="b" style="left:266.20px;top:257.00px;width:73.80px;height:11.60px;background:#c6d5e6;"></div>
<div class="t " style="left:267.90px;top:257.00px;font-size:9.2px;line-height:12px;transform:scaleX(0.9107);color:#4a5058;">Recording Servers</div>
<div class="b" style="left:244.30px;top:275.90px;width:7.30px;height:1.00px;background:#dcdce0;"></div>
<svg class="i" style="left:251.50px;top:269.80px" width="13.2" height="13.2"><use href="#failover"/></svg>
<div class="t " style="left:267.90px;top:270.60px;font-size:9.2px;line-height:12px;transform:scaleX(0.9209);color:#121212;">Failover Servers</div>
<div class="b" style="left:234.00px;top:289.50px;width:3.40px;height:1.00px;background:#dcdce0;"></div>
<div class="b" style="left:226.70px;top:286.40px;width:7.20px;height:7.20px;background:linear-gradient(135deg,#fff,#e8e8ee);border:1px solid #aeaeb8;border-radius:1.2px"></div>
<div class="b" style="left:228.50px;top:289.50px;width:3.60px;height:1.00px;background:#6876c0;"></div>
<svg class="i" style="left:237.40px;top:284.00px" width="12" height="12"><use href="#devices"/></svg>
<div class="t " style="left:253.50px;top:284.20px;font-size:9.2px;line-height:12px;transform:scaleX(0.9178);color:#121212;">Devices</div>
<div class="b" style="left:244.30px;top:303.10px;width:7.30px;height:1.00px;background:#dcdce0;"></div>
<svg class="i" style="left:252.00px;top:297.60px" width="12" height="12"><use href="#cameras"/></svg>
<div class="t " style="left:267.90px;top:297.80px;font-size:9.2px;line-height:12px;transform:scaleX(0.8825);color:#121212;">Cameras</div>
<div class="b" style="left:244.30px;top:316.70px;width:7.30px;height:1.00px;background:#dcdce0;"></div>
<svg class="i" style="left:252.00px;top:311.20px" width="12" height="12"><use href="#mic"/></svg>
<div class="t " style="left:267.90px;top:311.40px;font-size:9.2px;line-height:12px;transform:scaleX(0.9010);color:#121212;">Microphones</div>
<div class="b" style="left:244.30px;top:330.30px;width:7.30px;height:1.00px;background:#dcdce0;"></div>
<svg class="i" style="left:252.00px;top:324.80px" width="12" height="12"><use href="#speakers"/></svg>
<div class="t " style="left:267.90px;top:325.00px;font-size:9.2px;line-height:12px;transform:scaleX(0.8911);color:#121212;">Speakers</div>
<div class="b" style="left:244.30px;top:343.90px;width:7.30px;height:1.00px;background:#dcdce0;"></div>
<svg class="i" style="left:252.00px;top:338.40px" width="12" height="12"><use href="#metadata"/></svg>
<div class="t " style="left:267.90px;top:338.60px;font-size:9.2px;line-height:12px;transform:scaleX(0.8666);color:#121212;">Metadata</div>
<div class="b" style="left:244.30px;top:357.50px;width:7.30px;height:1.00px;background:#dcdce0;"></div>
<svg class="i" style="left:252.00px;top:352.00px" width="12" height="12"><use href="#input"/></svg>
<div class="t " style="left:267.90px;top:352.20px;font-size:9.2px;line-height:12px;transform:scaleX(0.8807);color:#121212;">Input</div>
<div class="b" style="left:244.30px;top:371.10px;width:7.30px;height:1.00px;background:#dcdce0;"></div>
<svg class="i" style="left:252.00px;top:365.60px" width="12" height="12"><use href="#output"/></svg>
<div class="t " style="left:267.90px;top:365.80px;font-size:9.2px;line-height:12px;transform:scaleX(0.8988);color:#121212;">Output</div>
<div class="b" style="left:234.00px;top:384.70px;width:3.40px;height:1.00px;background:#dcdce0;"></div>
<div class="b" style="left:226.70px;top:381.60px;width:7.20px;height:7.20px;background:linear-gradient(135deg,#fff,#e8e8ee);border:1px solid #aeaeb8;border-radius:1.2px"></div>
<div class="b" style="left:228.50px;top:384.70px;width:3.60px;height:1.00px;background:#6876c0;"></div>
<svg class="i" style="left:237.40px;top:379.20px" width="12" height="12"><use href="#client"/></svg>
<div class="t " style="left:253.50px;top:379.40px;font-size:9.2px;line-height:12px;transform:scaleX(0.9191);color:#121212;">Client</div>
<div class="b" style="left:244.30px;top:398.30px;width:7.30px;height:1.00px;background:#dcdce0;"></div>
<svg class="i" style="left:252.00px;top:392.80px" width="12" height="12"><use href="#smartwall"/></svg>
<div class="t " style="left:267.90px;top:393.00px;font-size:9.2px;line-height:12px;transform:scaleX(0.9040);color:#121212;">Smart Wall</div>
<div class="b" style="left:244.30px;top:411.90px;width:7.30px;height:1.00px;background:#dcdce0;"></div>
<svg class="i" style="left:252.00px;top:406.40px" width="12" height="12"><use href="#viewgroups"/></svg>
<div class="t " style="left:267.90px;top:406.60px;font-size:9.2px;line-height:12px;transform:scaleX(0.9039);color:#121212;">View Groups</div>
<div class="b" style="left:244.30px;top:425.50px;width:7.30px;height:1.00px;background:#dcdce0;"></div>
<svg class="i" style="left:252.00px;top:420.00px" width="12" height="12"><use href="#profile"/></svg>
<div class="t " style="left:267.90px;top:420.20px;font-size:9.2px;line-height:12px;transform:scaleX(0.9100);color:#121212;">Smart Client Profiles</div>
<div class="b" style="left:244.30px;top:439.10px;width:7.30px;height:1.00px;background:#dcdce0;"></div>
<svg class="i" style="left:252.00px;top:433.60px" width="12" height="12"><use href="#profile"/></svg>
<div class="t " style="left:267.90px;top:433.80px;font-size:9.2px;line-height:12px;transform:scaleX(0.9029);color:#121212;">Management Client Profiles</div>
<div class="b" style="left:244.30px;top:452.70px;width:7.30px;height:1.00px;background:#dcdce0;"></div>
<svg class="i" style="left:252.00px;top:447.20px" width="12" height="12"><use href="#matrix"/></svg>
<div class="t " style="left:267.90px;top:447.40px;font-size:9.2px;line-height:12px;transform:scaleX(0.9074);color:#121212;">Matrix</div>
<div class="b" style="left:234.00px;top:466.30px;width:3.40px;height:1.00px;background:#dcdce0;"></div>
<div class="b" style="left:226.70px;top:463.20px;width:7.20px;height:7.20px;background:linear-gradient(135deg,#fff,#e8e8ee);border:1px solid #aeaeb8;border-radius:1.2px"></div>
<div class="b" style="left:228.50px;top:466.30px;width:3.60px;height:1.00px;background:#6876c0;"></div>
<svg class="i" style="left:237.40px;top:460.80px" width="12" height="12"><use href="#rulesevents"/></svg>
<div class="t " style="left:253.50px;top:461.00px;font-size:9.2px;line-height:12px;transform:scaleX(0.9012);color:#121212;">Rules and Events</div>
<div class="b" style="left:244.30px;top:479.90px;width:7.30px;height:1.00px;background:#dcdce0;"></div>
<svg class="i" style="left:252.00px;top:474.40px" width="12" height="12"><use href="#rules"/></svg>
<div class="t " style="left:267.90px;top:474.60px;font-size:9.2px;line-height:12px;transform:scaleX(0.8936);color:#121212;">Rules</div>
<div class="b" style="left:244.30px;top:493.50px;width:7.30px;height:1.00px;background:#dcdce0;"></div>
<svg class="i" style="left:252.00px;top:488.00px" width="12" height="12"><use href="#time"/></svg>
<div class="t " style="left:267.90px;top:488.20px;font-size:9.2px;line-height:12px;transform:scaleX(0.9218);color:#121212;">Time Profiles</div>
<div class="b" style="left:244.30px;top:507.10px;width:7.30px;height:1.00px;background:#dcdce0;"></div>
<svg class="i" style="left:252.00px;top:501.60px" width="12" height="12"><use href="#notif"/></svg>
<div class="t " style="left:267.90px;top:501.80px;font-size:9.2px;line-height:12px;transform:scaleX(0.9206);color:#121212;">Notification Profiles</div>
<div class="b" style="left:244.30px;top:520.70px;width:7.30px;height:1.00px;background:#dcdce0;"></div>
<svg class="i" style="left:252.00px;top:515.20px" width="12" height="12"><use href="#userevents"/></svg>
<div class="t " style="left:267.90px;top:515.40px;font-size:9.2px;line-height:12px;transform:scaleX(0.9069);color:#121212;">User-defined Events</div>
<div class="b" style="left:244.30px;top:534.30px;width:7.30px;height:1.00px;background:#dcdce0;"></div>
<svg class="i" style="left:252.00px;top:528.80px" width="12" height="12"><use href="#analytics"/></svg>
<div class="t " style="left:267.90px;top:529.00px;font-size:9.2px;line-height:12px;transform:scaleX(0.9168);color:#121212;">Analytics Events</div>
<div class="b" style="left:244.30px;top:547.90px;width:7.30px;height:1.00px;background:#dcdce0;"></div>
<svg class="i" style="left:252.00px;top:542.40px" width="12" height="12"><use href="#generic"/></svg>
<div class="t " style="left:267.90px;top:542.60px;font-size:9.2px;line-height:12px;transform:scaleX(0.9138);color:#121212;">Generic Events</div>
<div class="b" style="left:234.00px;top:561.50px;width:3.40px;height:1.00px;background:#dcdce0;"></div>
<div class="b" style="left:226.70px;top:558.40px;width:7.20px;height:7.20px;background:linear-gradient(135deg,#fff,#e8e8ee);border:1px solid #aeaeb8;border-radius:1.2px"></div>
<div class="b" style="left:228.50px;top:561.50px;width:3.60px;height:1.00px;background:#6876c0;"></div>
<svg class="i" style="left:237.40px;top:556.00px" width="12" height="12"><use href="#security"/></svg>
<div class="t " style="left:253.50px;top:556.20px;font-size:9.2px;line-height:12px;transform:scaleX(0.9005);color:#121212;">Security</div>
<div class="b" style="left:244.30px;top:575.10px;width:7.30px;height:1.00px;background:#dcdce0;"></div>
<svg class="i" style="left:252.00px;top:569.60px" width="12" height="12"><use href="#roles"/></svg>
<div class="t " style="left:267.90px;top:569.80px;font-size:9.2px;line-height:12px;transform:scaleX(0.8979);color:#121212;">Roles</div>
<div class="b" style="left:244.30px;top:588.70px;width:7.30px;height:1.00px;background:#dcdce0;"></div>
<svg class="i" style="left:252.00px;top:583.20px" width="12" height="12"><use href="#users"/></svg>
<div class="t " style="left:267.90px;top:583.40px;font-size:9.2px;line-height:12px;transform:scaleX(0.9242);color:#121212;">Basic Users</div>
<div class="b" style="left:234.00px;top:602.30px;width:3.40px;height:1.00px;background:#dcdce0;"></div>
<div class="b" style="left:226.70px;top:599.20px;width:7.20px;height:7.20px;background:linear-gradient(135deg,#fff,#e8e8ee);border:1px solid #aeaeb8;border-radius:1.2px"></div>
<div class="b" style="left:228.50px;top:602.30px;width:3.60px;height:1.00px;background:#6876c0;"></div>
<svg class="i" style="left:237.40px;top:596.80px" width="12" height="12"><use href="#dashboard"/></svg>
<div class="t " style="left:253.50px;top:597.00px;font-size:9.2px;line-height:12px;transform:scaleX(0.9022);color:#121212;">System Dashboard</div>
<div class="b" style="left:244.30px;top:615.90px;width:7.30px;height:1.00px;background:#dcdce0;"></div>
<svg class="i" style="left:252.00px;top:610.40px" width="12" height="12"><use href="#sysmon"/></svg>
<div class="t " style="left:267.90px;top:610.60px;font-size:9.2px;line-height:12px;transform:scaleX(0.9056);color:#121212;">System Monitor</div>
<div class="b" style="left:244.30px;top:629.50px;width:7.30px;height:1.00px;background:#dcdce0;"></div>
<svg class="i" style="left:252.00px;top:624.00px" width="12" height="12"><use href="#tasks"/></svg>
<div class="t " style="left:267.90px;top:624.20px;font-size:9.2px;line-height:12px;transform:scaleX(0.9360);color:#121212;">Current Tasks</div>
<div class="b" style="left:244.30px;top:643.10px;width:7.30px;height:1.00px;background:#dcdce0;"></div>
<svg class="i" style="left:252.00px;top:637.60px" width="12" height="12"><use href="#config"/></svg>
<div class="t " style="left:267.90px;top:637.80px;font-size:9.2px;line-height:12px;transform:scaleX(0.9029);color:#121212;">Configuration Reports</div>
<div class="b" style="left:234.00px;top:656.70px;width:3.40px;height:1.00px;background:#dcdce0;"></div>
<div class="b" style="left:226.70px;top:653.60px;width:7.20px;height:7.20px;background:linear-gradient(135deg,#fff,#e8e8ee);border:1px solid #aeaeb8;border-radius:1.2px"></div>
<div class="b" style="left:228.50px;top:656.70px;width:3.60px;height:1.00px;background:#6876c0;"></div>
<svg class="i" style="left:236.90px;top:650.60px" width="13.2" height="13.2"><use href="#serverlogs"/></svg>
<div class="t " style="left:253.50px;top:651.40px;font-size:9.2px;line-height:12px;transform:scaleX(0.9042);color:#121212;">Server Logs</div>
<div class="b" style="left:244.30px;top:670.30px;width:7.30px;height:1.00px;background:#dcdce0;"></div>
<svg class="i" style="left:251.50px;top:664.20px" width="13.2" height="13.2"><use href="#log"/></svg>
<div class="t " style="left:267.90px;top:665.00px;font-size:9.2px;line-height:12px;transform:scaleX(0.8925);color:#121212;">System Log</div>
<div class="b" style="left:244.30px;top:683.90px;width:7.30px;height:1.00px;background:#dcdce0;"></div>
<svg class="i" style="left:251.50px;top:677.80px" width="13.2" height="13.2"><use href="#log"/></svg>
<div class="t " style="left:267.90px;top:678.60px;font-size:9.2px;line-height:12px;transform:scaleX(0.8860);color:#121212;">Audit Log</div>
<div class="b" style="left:244.30px;top:697.50px;width:7.30px;height:1.00px;background:#dcdce0;"></div>
<svg class="i" style="left:251.50px;top:691.40px" width="13.2" height="13.2"><use href="#log"/></svg>
<div class="t " style="left:267.90px;top:692.20px;font-size:9.2px;line-height:12px;transform:scaleX(0.8918);color:#121212;">Rule Log</div>
<div class="b" style="left:234.00px;top:711.10px;width:3.40px;height:1.00px;background:#dcdce0;"></div>
<div class="b" style="left:226.70px;top:708.00px;width:7.20px;height:7.20px;background:linear-gradient(135deg,#fff,#e8e8ee);border:1px solid #aeaeb8;border-radius:1.2px"></div>
<div class="b" style="left:228.50px;top:711.10px;width:3.60px;height:1.00px;background:#6876c0;"></div>
<div class="b" style="left:229.80px;top:709.80px;width:1.00px;height:3.60px;background:#6876c0;"></div>
<svg class="i" style="left:237.40px;top:705.60px" width="12" height="12"><use href="#alarms"/></svg>
<div class="t " style="left:253.50px;top:705.80px;font-size:9.2px;line-height:12px;transform:scaleX(0.8883);color:#121212;">Alarms</div>
<div class="b" style="left:208.00px;top:809.60px;width:206.00px;height:1.00px;background:#a8a8b0;"></div>
<div class="b" style="left:208.00px;top:810.60px;width:67.00px;height:16.40px;background:#f1f0f3;border-right:1px solid #8e8e98"></div>
<div class="b" style="left:275.50px;top:811.60px;width:134.00px;height:15.00px;background:#fff;border-top:1px solid #c9c9d0"></div>
<div class="t " style="left:214.30px;top:813.00px;font-size:9.4px;line-height:12px;transform:scaleX(0.7643);color:#111;">Site Navigation</div>
<div class="b" style="left:441.10px;top:173.60px;width:1.00px;height:6.10px;background:#dcdce0;"></div>
<div class="b" style="left:455.70px;top:185.70px;width:1.00px;height:292.50px;background:#dcdce0;"></div>
<div class="b" style="left:469.90px;top:450.90px;width:1.00px;height:7.10px;background:#dcdce0;"></div>
<div class="b" style="left:431.00px;top:167.10px;width:3.70px;height:1.00px;background:#dcdce0;"></div>
<div class="b" style="left:423.80px;top:164.00px;width:7.20px;height:7.20px;background:linear-gradient(135deg,#fff,#e8e8ee);border:1px solid #aeaeb8;border-radius:1.2px"></div>
<div class="b" style="left:425.60px;top:167.10px;width:3.60px;height:1.00px;background:#6876c0;"></div>
<svg class="i" style="left:434.70px;top:161.60px" width="12" height="12"><use href="#recsrv"/></svg>
<div class="t " style="left:450.80px;top:161.80px;font-size:9.2px;line-height:12px;transform:scaleX(0.9094);color:#121212;">Recording Servers</div>
<div class="b" style="left:445.20px;top:179.20px;width:3.60px;height:1.00px;background:#dcdce0;"></div>
<div class="b" style="left:438.00px;top:176.10px;width:7.20px;height:7.20px;background:linear-gradient(135deg,#fff,#e8e8ee);border:1px solid #aeaeb8;border-radius:1.2px"></div>
<div class="b" style="left:439.80px;top:179.20px;width:3.60px;height:1.00px;background:#6876c0;"></div>
<svg class="i" style="left:448.80px;top:173.70px" width="12" height="12"><use href="#srv1"/></svg>
<div class="t sc" style="left:464.90px;top:173.90px;font-size:9.2px;line-height:12px;transform:scaleX(0.9331);color:#111;">DKTS-TV-01-V04</div>
<div class="b" style="left:459.80px;top:191.30px;width:3.30px;height:1.00px;background:#dcdce0;"></div>
<div class="b" style="left:452.60px;top:188.20px;width:7.20px;height:7.20px;background:linear-gradient(135deg,#fff,#e8e8ee);border:1px solid #aeaeb8;border-radius:1.2px"></div>
<div class="b" style="left:454.40px;top:191.30px;width:3.60px;height:1.00px;background:#6876c0;"></div>
<div class="b" style="left:455.70px;top:190.00px;width:1.00px;height:3.60px;background:#6876c0;"></div>
<svg class="i" style="left:463.10px;top:187.60px" width="12.8" height="9.2"><use href="#device"/></svg>
<div class="t " style="left:479.10px;top:186.00px;font-size:9.2px;line-height:12px;transform:scaleX(0.9141);color:#121212;">Axis 1 channel device (10.100.50.15)</div>
<div class="b" style="left:459.80px;top:203.40px;width:3.30px;height:1.00px;background:#dcdce0;"></div>
<div class="b" style="left:452.60px;top:200.30px;width:7.20px;height:7.20px;background:linear-gradient(135deg,#fff,#e8e8ee);border:1px solid #aeaeb8;border-radius:1.2px"></div>
<div class="b" style="left:454.40px;top:203.40px;width:3.60px;height:1.00px;background:#6876c0;"></div>
<div class="b" style="left:455.70px;top:202.10px;width:1.00px;height:3.60px;background:#6876c0;"></div>
<svg class="i" style="left:463.10px;top:199.70px" width="12.8" height="9.2"><use href="#device"/></svg>
<div class="t " style="left:479.10px;top:198.10px;font-size:9.2px;line-height:12px;transform:scaleX(0.9141);color:#121212;">Axis 1 channel device (10.100.50.76)</div>
<div class="b" style="left:459.80px;top:215.50px;width:3.30px;height:1.00px;background:#dcdce0;"></div>
<div class="b" style="left:452.60px;top:212.40px;width:7.20px;height:7.20px;background:linear-gradient(135deg,#fff,#e8e8ee);border:1px solid #aeaeb8;border-radius:1.2px"></div>
<div class="b" style="left:454.40px;top:215.50px;width:3.60px;height:1.00px;background:#6876c0;"></div>
<div class="b" style="left:455.70px;top:214.20px;width:1.00px;height:3.60px;background:#6876c0;"></div>
<svg class="i" style="left:463.10px;top:211.80px" width="12.8" height="9.2"><use href="#device"/></svg>
<div class="t " style="left:479.10px;top:210.20px;font-size:9.2px;line-height:12px;transform:scaleX(0.9141);color:#121212;">Axis 1 channel device (10.100.50.77)</div>
<div class="b" style="left:459.80px;top:227.60px;width:3.30px;height:1.00px;background:#dcdce0;"></div>
<div class="b" style="left:452.60px;top:224.50px;width:7.20px;height:7.20px;background:linear-gradient(135deg,#fff,#e8e8ee);border:1px solid #aeaeb8;border-radius:1.2px"></div>
<div class="b" style="left:454.40px;top:227.60px;width:3.60px;height:1.00px;background:#6876c0;"></div>
<div class="b" style="left:455.70px;top:226.30px;width:1.00px;height:3.60px;background:#6876c0;"></div>
<svg class="i" style="left:463.10px;top:223.90px" width="12.8" height="9.2"><use href="#device"/></svg>
<div class="t " style="left:479.10px;top:222.30px;font-size:9.2px;line-height:12px;transform:scaleX(0.9141);color:#121212;">Axis 1 channel device (10.100.50.79)</div>
<div class="b" style="left:459.80px;top:239.70px;width:3.30px;height:1.00px;background:#dcdce0;"></div>
<div class="b" style="left:452.60px;top:236.60px;width:7.20px;height:7.20px;background:linear-gradient(135deg,#fff,#e8e8ee);border:1px solid #aeaeb8;border-radius:1.2px"></div>
<div class="b" style="left:454.40px;top:239.70px;width:3.60px;height:1.00px;background:#6876c0;"></div>
<div class="b" style="left:455.70px;top:238.40px;width:1.00px;height:3.60px;background:#6876c0;"></div>
<svg class="i" style="left:463.10px;top:236.00px" width="12.8" height="9.2"><use href="#device"/></svg>
<div class="t " style="left:479.10px;top:234.40px;font-size:9.2px;line-height:12px;transform:scaleX(0.9141);color:#121212;">Axis 1 channel device (10.100.50.80)</div>
<div class="b" style="left:459.80px;top:251.80px;width:3.30px;height:1.00px;background:#dcdce0;"></div>
<div class="b" style="left:452.60px;top:248.70px;width:7.20px;height:7.20px;background:linear-gradient(135deg,#fff,#e8e8ee);border:1px solid #aeaeb8;border-radius:1.2px"></div>
<div class="b" style="left:454.40px;top:251.80px;width:3.60px;height:1.00px;background:#6876c0;"></div>
<div class="b" style="left:455.70px;top:250.50px;width:1.00px;height:3.60px;background:#6876c0;"></div>
<svg class="i" style="left:463.10px;top:248.10px" width="12.8" height="9.2"><use href="#device"/></svg>
<div class="t " style="left:479.10px;top:246.50px;font-size:9.2px;line-height:12px;transform:scaleX(0.9141);color:#121212;">Axis 1 channel device (10.100.50.95)</div>
<div class="b" style="left:459.80px;top:263.90px;width:3.30px;height:1.00px;background:#dcdce0;"></div>
<div class="b" style="left:452.60px;top:260.80px;width:7.20px;height:7.20px;background:linear-gradient(135deg,#fff,#e8e8ee);border:1px solid #aeaeb8;border-radius:1.2px"></div>
<div class="b" style="left:454.40px;top:263.90px;width:3.60px;height:1.00px;background:#6876c0;"></div>
<div class="b" style="left:455.70px;top:262.60px;width:1.00px;height:3.60px;background:#6876c0;"></div>
<svg class="i" style="left:463.10px;top:260.20px" width="12.8" height="9.2"><use href="#device"/></svg>
<div class="t " style="left:479.10px;top:258.60px;font-size:9.2px;line-height:12px;transform:scaleX(0.9164);color:#121212;">Axis 1 channel device (10.100.50.116)</div>
<div class="b" style="left:459.80px;top:276.00px;width:3.30px;height:1.00px;background:#dcdce0;"></div>
<div class="b" style="left:452.60px;top:272.90px;width:7.20px;height:7.20px;background:linear-gradient(135deg,#fff,#e8e8ee);border:1px solid #aeaeb8;border-radius:1.2px"></div>
<div class="b" style="left:454.40px;top:276.00px;width:3.60px;height:1.00px;background:#6876c0;"></div>
<div class="b" style="left:455.70px;top:274.70px;width:1.00px;height:3.60px;background:#6876c0;"></div>
<svg class="i" style="left:463.10px;top:272.30px" width="12.8" height="9.2"><use href="#device"/></svg>
<div class="t " style="left:479.10px;top:270.70px;font-size:9.2px;line-height:12px;transform:scaleX(0.9124);color:#121212;">Axis 1 channel device (10.100.50.171)</div>
<div class="b" style="left:459.80px;top:288.10px;width:3.30px;height:1.00px;background:#dcdce0;"></div>
<div class="b" style="left:452.60px;top:285.00px;width:7.20px;height:7.20px;background:linear-gradient(135deg,#fff,#e8e8ee);border:1px solid #aeaeb8;border-radius:1.2px"></div>
<div class="b" style="left:454.40px;top:288.10px;width:3.60px;height:1.00px;background:#6876c0;"></div>
<div class="b" style="left:455.70px;top:286.80px;width:1.00px;height:3.60px;background:#6876c0;"></div>
<svg class="i" style="left:463.10px;top:284.40px" width="12.8" height="9.2"><use href="#device"/></svg>
<div class="t " style="left:479.10px;top:282.80px;font-size:9.2px;line-height:12px;transform:scaleX(0.9124);color:#121212;">Axis 1 channel device (10.100.50.175)</div>
<div class="b" style="left:459.80px;top:300.20px;width:3.30px;height:1.00px;background:#dcdce0;"></div>
<div class="b" style="left:452.60px;top:297.10px;width:7.20px;height:7.20px;background:linear-gradient(135deg,#fff,#e8e8ee);border:1px solid #aeaeb8;border-radius:1.2px"></div>
<div class="b" style="left:454.40px;top:300.20px;width:3.60px;height:1.00px;background:#6876c0;"></div>
<div class="b" style="left:455.70px;top:298.90px;width:1.00px;height:3.60px;background:#6876c0;"></div>
<svg class="i" style="left:463.10px;top:296.50px" width="12.8" height="9.2"><use href="#device"/></svg>
<div class="t " style="left:479.10px;top:294.90px;font-size:9.2px;line-height:12px;transform:scaleX(0.9124);color:#121212;">Axis 1 channel device (10.100.50.203)</div>
<div class="b" style="left:459.80px;top:312.30px;width:3.30px;height:1.00px;background:#dcdce0;"></div>
<div class="b" style="left:452.60px;top:309.20px;width:7.20px;height:7.20px;background:linear-gradient(135deg,#fff,#e8e8ee);border:1px solid #aeaeb8;border-radius:1.2px"></div>
<div class="b" style="left:454.40px;top:312.30px;width:3.60px;height:1.00px;background:#6876c0;"></div>
<div class="b" style="left:455.70px;top:311.00px;width:1.00px;height:3.60px;background:#6876c0;"></div>
<svg class="i" style="left:463.10px;top:308.60px" width="12.8" height="9.2"><use href="#device"/></svg>
<div class="t " style="left:479.10px;top:307.00px;font-size:9.2px;line-height:12px;transform:scaleX(0.9124);color:#121212;">Axis 1 channel device (10.100.50.204)</div>
<div class="b" style="left:459.80px;top:324.40px;width:3.30px;height:1.00px;background:#dcdce0;"></div>
<div class="b" style="left:452.60px;top:321.30px;width:7.20px;height:7.20px;background:linear-gradient(135deg,#fff,#e8e8ee);border:1px solid #aeaeb8;border-radius:1.2px"></div>
<div class="b" style="left:454.40px;top:324.40px;width:3.60px;height:1.00px;background:#6876c0;"></div>
<div class="b" style="left:455.70px;top:323.10px;width:1.00px;height:3.60px;background:#6876c0;"></div>
<svg class="i" style="left:463.10px;top:320.70px" width="12.8" height="9.2"><use href="#device"/></svg>
<div class="t " style="left:479.10px;top:319.10px;font-size:9.2px;line-height:12px;transform:scaleX(0.9124);color:#121212;">Axis 1 channel device (10.100.50.205)</div>
<div class="b" style="left:459.80px;top:336.50px;width:3.30px;height:1.00px;background:#dcdce0;"></div>
<div class="b" style="left:452.60px;top:333.40px;width:7.20px;height:7.20px;background:linear-gradient(135deg,#fff,#e8e8ee);border:1px solid #aeaeb8;border-radius:1.2px"></div>
<div class="b" style="left:454.40px;top:336.50px;width:3.60px;height:1.00px;background:#6876c0;"></div>
<div class="b" style="left:455.70px;top:335.20px;width:1.00px;height:3.60px;background:#6876c0;"></div>
<svg class="i" style="left:463.10px;top:332.80px" width="12.8" height="9.2"><use href="#device"/></svg>
<div class="t " style="left:479.10px;top:331.20px;font-size:9.2px;line-height:12px;transform:scaleX(0.9124);color:#121212;">Axis 1 channel PTZ device (10.100.50.55)</div>
<div class="b" style="left:459.80px;top:348.60px;width:3.30px;height:1.00px;background:#dcdce0;"></div>
<div class="b" style="left:452.60px;top:345.50px;width:7.20px;height:7.20px;background:linear-gradient(135deg,#fff,#e8e8ee);border:1px solid #aeaeb8;border-radius:1.2px"></div>
<div class="b" style="left:454.40px;top:348.60px;width:3.60px;height:1.00px;background:#6876c0;"></div>
<div class="b" style="left:455.70px;top:347.30px;width:1.00px;height:3.60px;background:#6876c0;"></div>
<svg class="i" style="left:463.10px;top:344.90px" width="12.8" height="9.2"><use href="#device"/></svg>
<div class="t " style="left:479.10px;top:343.30px;font-size:9.2px;line-height:12px;transform:scaleX(0.9124);color:#121212;">Axis 1 channel PTZ device (10.100.50.88)</div>
<div class="b" style="left:459.80px;top:360.70px;width:3.30px;height:1.00px;background:#dcdce0;"></div>
<div class="b" style="left:452.60px;top:357.60px;width:7.20px;height:7.20px;background:linear-gradient(135deg,#fff,#e8e8ee);border:1px solid #aeaeb8;border-radius:1.2px"></div>
<div class="b" style="left:454.40px;top:360.70px;width:3.60px;height:1.00px;background:#6876c0;"></div>
<div class="b" style="left:455.70px;top:359.40px;width:1.00px;height:3.60px;background:#6876c0;"></div>
<svg class="i" style="left:463.10px;top:357.00px" width="12.8" height="9.2"><use href="#device"/></svg>
<div class="t " style="left:479.10px;top:355.40px;font-size:9.2px;line-height:12px;transform:scaleX(0.9031);color:#121212;">Axis 209 MFD Camera (10.100.50.68)</div>
<div class="b" style="left:459.80px;top:372.80px;width:3.30px;height:1.00px;background:#dcdce0;"></div>
<div class="b" style="left:452.60px;top:369.70px;width:7.20px;height:7.20px;background:linear-gradient(135deg,#fff,#e8e8ee);border:1px solid #aeaeb8;border-radius:1.2px"></div>
<div class="b" style="left:454.40px;top:372.80px;width:3.60px;height:1.00px;background:#6876c0;"></div>
<div class="b" style="left:455.70px;top:371.50px;width:1.00px;height:3.60px;background:#6876c0;"></div>
<svg class="i" style="left:463.10px;top:369.10px" width="12.8" height="9.2"><use href="#device"/></svg>
<div class="t " style="left:479.10px;top:367.50px;font-size:9.2px;line-height:12px;transform:scaleX(0.9031);color:#121212;">Axis 209 MFD Camera (10.100.50.72)</div>
<div class="b" style="left:459.80px;top:384.90px;width:3.30px;height:1.00px;background:#dcdce0;"></div>
<div class="b" style="left:452.60px;top:381.80px;width:7.20px;height:7.20px;background:linear-gradient(135deg,#fff,#e8e8ee);border:1px solid #aeaeb8;border-radius:1.2px"></div>
<div class="b" style="left:454.40px;top:384.90px;width:3.60px;height:1.00px;background:#6876c0;"></div>
<div class="b" style="left:455.70px;top:383.60px;width:1.00px;height:3.60px;background:#6876c0;"></div>
<svg class="i" style="left:463.10px;top:381.20px" width="12.8" height="9.2"><use href="#device"/></svg>
<div class="t " style="left:479.10px;top:379.60px;font-size:9.2px;line-height:12px;transform:scaleX(0.9029);color:#121212;">Axis 215 Camera (10.100.50.45)</div>
<div class="b" style="left:459.80px;top:397.00px;width:3.30px;height:1.00px;background:#dcdce0;"></div>
<div class="b" style="left:452.60px;top:393.90px;width:7.20px;height:7.20px;background:linear-gradient(135deg,#fff,#e8e8ee);border:1px solid #aeaeb8;border-radius:1.2px"></div>
<div class="b" style="left:454.40px;top:397.00px;width:3.60px;height:1.00px;background:#6876c0;"></div>
<div class="b" style="left:455.70px;top:395.70px;width:1.00px;height:3.60px;background:#6876c0;"></div>
<svg class="i" style="left:463.10px;top:393.30px" width="12.8" height="9.2"><use href="#device"/></svg>
<div class="t " style="left:479.10px;top:391.70px;font-size:9.2px;line-height:12px;transform:scaleX(0.9039);color:#121212;">Axis 216FD Camera (10.100.50.32)</div>
<div class="b" style="left:459.80px;top:409.10px;width:3.30px;height:1.00px;background:#dcdce0;"></div>
<div class="b" style="left:452.60px;top:406.00px;width:7.20px;height:7.20px;background:linear-gradient(135deg,#fff,#e8e8ee);border:1px solid #aeaeb8;border-radius:1.2px"></div>
<div class="b" style="left:454.40px;top:409.10px;width:3.60px;height:1.00px;background:#6876c0;"></div>
<div class="b" style="left:455.70px;top:407.80px;width:1.00px;height:3.60px;background:#6876c0;"></div>
<svg class="i" style="left:463.10px;top:405.40px" width="12.8" height="9.2"><use href="#device"/></svg>
<div class="t " style="left:479.10px;top:403.80px;font-size:9.2px;line-height:12px;transform:scaleX(0.8987);color:#121212;">Panasonic BB-HCM701 (10.100.53.42)</div>
<div class="b" style="left:459.80px;top:421.20px;width:3.30px;height:1.00px;background:#dcdce0;"></div>
<div class="b" style="left:452.60px;top:418.10px;width:7.20px;height:7.20px;background:linear-gradient(135deg,#fff,#e8e8ee);border:1px solid #aeaeb8;border-radius:1.2px"></div>
<div class="b" style="left:454.40px;top:421.20px;width:3.60px;height:1.00px;background:#6876c0;"></div>
<div class="b" style="left:455.70px;top:419.90px;width:1.00px;height:3.60px;background:#6876c0;"></div>
<svg class="i" style="left:463.10px;top:417.50px" width="12.8" height="9.2"><use href="#device"/></svg>
<div class="t " style="left:479.10px;top:415.90px;font-size:9.2px;line-height:12px;transform:scaleX(0.8987);color:#121212;">Panasonic BB-HCM705 (10.100.53.43)</div>
<div class="b" style="left:459.80px;top:433.30px;width:3.30px;height:1.00px;background:#dcdce0;"></div>
<div class="b" style="left:452.60px;top:430.20px;width:7.20px;height:7.20px;background:linear-gradient(135deg,#fff,#e8e8ee);border:1px solid #aeaeb8;border-radius:1.2px"></div>
<div class="b" style="left:454.40px;top:433.30px;width:3.60px;height:1.00px;background:#6876c0;"></div>
<div class="b" style="left:455.70px;top:432.00px;width:1.00px;height:3.60px;background:#6876c0;"></div>
<svg class="i" style="left:463.10px;top:429.60px" width="12.8" height="9.2"><use href="#device"/></svg>
<div class="t " style="left:479.10px;top:428.00px;font-size:9.2px;line-height:12px;transform:scaleX(0.8987);color:#121212;">Panasonic BB-HCM735 (10.100.53.44)</div>
<div class="b" style="left:459.80px;top:445.40px;width:3.30px;height:1.00px;background:#dcdce0;"></div>
<div class="b" style="left:452.60px;top:442.30px;width:7.20px;height:7.20px;background:linear-gradient(135deg,#fff,#e8e8ee);border:1px solid #aeaeb8;border-radius:1.2px"></div>
<div class="b" style="left:454.40px;top:445.40px;width:3.60px;height:1.00px;background:#6876c0;"></div>
<svg class="i" style="left:463.10px;top:441.70px" width="12.8" height="9.2"><use href="#device"/></svg>
<div class="t " style="left:479.10px;top:440.10px;font-size:9.2px;line-height:12px;transform:scaleX(0.9122);color:#121212;">Panasonic SPxxx/SFxxx/SWxxx no I/O Camera Series (10.100.53.200)</div>
<div class="b" style="left:470.40px;top:457.50px;width:6.40px;height:1.00px;background:#dcdce0;"></div>
<svg class="i" style="left:476.80px;top:452.40px" width="13" height="12"><use href="#camplay"/></svg>
<div class="b" style="left:491.30px;top:452.60px;width:123.40px;height:10.90px;background:#c6d5e6;"></div>
<div class="t " style="left:494.10px;top:452.20px;font-size:9.2px;line-height:12px;transform:scaleX(0.9043);color:#4a5058;">Employee driveway - Camera 1</div>
<div class="b" style="left:459.80px;top:469.60px;width:3.30px;height:1.00px;background:#dcdce0;"></div>
<div class="b" style="left:452.60px;top:466.50px;width:7.20px;height:7.20px;background:linear-gradient(135deg,#fff,#e8e8ee);border:1px solid #aeaeb8;border-radius:1.2px"></div>
<div class="b" style="left:454.40px;top:469.60px;width:3.60px;height:1.00px;background:#6876c0;"></div>
<div class="b" style="left:455.70px;top:468.30px;width:1.00px;height:3.60px;background:#6876c0;"></div>
<svg class="i" style="left:463.10px;top:465.90px" width="12.8" height="9.2"><use href="#device"/></svg>
<div class="t " style="left:479.10px;top:464.30px;font-size:9.2px;line-height:12px;transform:scaleX(0.9014);color:#121212;">Panasonic WV-SF549 (10.100.53.85)</div>
<div class="b" style="left:459.80px;top:481.70px;width:3.30px;height:1.00px;background:#dcdce0;"></div>
<div class="b" style="left:452.60px;top:478.60px;width:7.20px;height:7.20px;background:linear-gradient(135deg,#fff,#e8e8ee);border:1px solid #aeaeb8;border-radius:1.2px"></div>
<div class="b" style="left:454.40px;top:481.70px;width:3.60px;height:1.00px;background:#6876c0;"></div>
<div class="b" style="left:455.70px;top:480.40px;width:1.00px;height:3.60px;background:#6876c0;"></div>
<svg class="i" style="left:463.10px;top:478.00px" width="12.8" height="9.2"><use href="#device"/></svg>
<div class="t " style="left:479.10px;top:476.40px;font-size:9.2px;line-height:12px;transform:scaleX(0.9143);color:#121212;">Virtual Video Server</div>
<div class="b" style="left:798.00px;top:161.60px;width:377.00px;height:415.60px;background:#f5f2f6;"></div>
<div class="b" style="left:1171.20px;top:161.60px;width:1.00px;height:396.00px;background:#c4c2c8;"></div>
<div class="b" style="left:1172.20px;top:161.60px;width:3.00px;height:415.60px;background:#fff;"></div>
<div class="b" style="left:801.40px;top:164.80px;width:368.60px;height:14.80px;background:#f6f3f7;border:1px solid #c6c4ca"></div>
<div class="t " style="left:804.80px;top:166.20px;font-size:9.2px;line-height:12px;transform:scaleX(0.9176);color:#aeacb2;">Panasonic SPxxx/SFxxx/SWxxx no I/O Camera Series</div>
<div class="b" style="left:1156.80px;top:166.00px;width:12.00px;height:12.40px;background:#fbfafc;border:1px solid #c8c6cc"></div>
<svg class="i" style="left:1160.4px;top:171px" width="5" height="3" viewBox="0 0 5 3"><path d="M0 0H5L2.5 3z" fill="#8a888e"/></svg>
<div class="b" style="left:801.40px;top:183.70px;width:368.60px;height:321.90px;background:#fff;border:1px solid #b2b0b6"></div>
<div class="b" style="left:802.40px;top:184.70px;width:16.20px;height:290.40px;background:#cbc9cd;"></div>
<div class="b" style="left:802.40px;top:184.70px;width:366.60px;height:12.10px;background:#cbc9cd;"></div>
<svg class="i" style="left:808.4px;top:188.75px" width="4.2" height="4.2" viewBox="0 0 4 4"><path d="M4 0V4H0z" fill="#3a3a3a"/></svg>
<div class="t " style="left:820.40px;top:184.85px;font-size:9.3px;line-height:12px;transform:scaleX(0.9850);color:#0a0a0a;font-weight:bold;">H264 - streamed</div>
<div class="b" style="left:817.80px;top:207.90px;width:351.20px;height:1.00px;background:#d9d6dc;"></div>
<div class="t " style="left:819.90px;top:196.85px;font-size:9.2px;line-height:12px;transform:scaleX(0.8680);color:#0c0c0c;">Control priority</div>
<div class="t " style="left:979.20px;top:196.95px;font-size:9.3px;line-height:12px;transform:scaleX(0.9251);color:#0a0a0a;font-weight:bold;">Framerate</div>
<div class="b" style="left:817.80px;top:220.00px;width:351.20px;height:1.00px;background:#d9d6dc;"></div>
<div class="b" style="left:817.80px;top:208.90px;width:158.60px;height:11.10px;background:#3296fb;"></div>
<div class="t " style="left:819.90px;top:208.95px;font-size:9.2px;line-height:12px;transform:scaleX(0.8680);color:#fff;">Frames per second</div>
<div class="b" style="left:1156.80px;top:209.10px;width:12.40px;height:10.70px;background:linear-gradient(180deg,#f4f4f6,#dcdce0);border:1px solid #707078"></div>
<svg class="i" style="left:1160.3px;top:214.35px" width="5.4" height="3.2" viewBox="0 0 5 3"><path d="M0 0H5L2.5 3z" fill="#111"/></svg>
<div class="t " style="left:979.20px;top:209.05px;font-size:9.3px;line-height:12px;transform:scaleX(1.0634);color:#0a0a0a;font-weight:bold;">10</div>
<div class="b" style="left:817.80px;top:232.10px;width:351.20px;height:1.00px;background:#d9d6dc;"></div>
<div class="t " style="left:819.90px;top:221.05px;font-size:9.2px;line-height:12px;transform:scaleX(0.8680);color:#0c0c0c;">Max. frames between keyframes</div>
<div class="t " style="left:978.90px;top:221.05px;font-size:9.2px;line-height:12px;transform:scaleX(0.8660);color:#2a2a2a;">30</div>
<div class="b" style="left:817.80px;top:244.20px;width:351.20px;height:1.00px;background:#d9d6dc;"></div>
<div class="t " style="left:819.90px;top:233.15px;font-size:9.2px;line-height:12px;transform:scaleX(0.8680);color:#0c0c0c;">Max. frames between keyframes mode</div>
<div class="t " style="left:978.90px;top:233.15px;font-size:9.2px;line-height:12px;transform:scaleX(0.8660);color:#2a2a2a;">Default (determined by driver)</div>
<div class="b" style="left:817.80px;top:256.30px;width:351.20px;height:1.00px;background:#d9d6dc;"></div>
<div class="t " style="left:819.90px;top:245.25px;font-size:9.2px;line-height:12px;transform:scaleX(0.8680);color:#0c0c0c;">Maximum bit rate (kbit/s)</div>
<div class="t " style="left:979.20px;top:245.35px;font-size:9.3px;line-height:12px;transform:scaleX(1.0441);color:#0a0a0a;font-weight:bold;">4096</div>
<div class="b" style="left:817.80px;top:268.40px;width:351.20px;height:1.00px;background:#d9d6dc;"></div>
<div class="t " style="left:819.90px;top:257.35px;font-size:9.2px;line-height:12px;transform:scaleX(0.8680);color:#0c0c0c;">Minimum bit rate (kbit/s)</div>
<div class="t " style="left:979.20px;top:257.45px;font-size:9.3px;line-height:12px;transform:scaleX(1.0441);color:#0a0a0a;font-weight:bold;">4096</div>
<div class="b" style="left:817.80px;top:280.50px;width:351.20px;height:1.00px;background:#d9d6dc;"></div>
<div class="t " style="left:819.90px;top:269.45px;font-size:9.2px;line-height:12px;transform:scaleX(0.8680);color:#0c0c0c;">Quality</div>
<div class="t " style="left:978.90px;top:269.45px;font-size:9.2px;line-height:12px;transform:scaleX(0.8660);color:#2a2a2a;">Normal</div>
<div class="b" style="left:817.80px;top:292.60px;width:351.20px;height:1.00px;background:#d9d6dc;"></div>
<div class="t " style="left:819.90px;top:281.55px;font-size:9.2px;line-height:12px;transform:scaleX(0.8680);color:#0c0c0c;">Resolution</div>
<div class="t " style="left:979.20px;top:281.65px;font-size:9.3px;line-height:12px;transform:scaleX(1.0054);color:#0a0a0a;font-weight:bold;">1280x720</div>
<div class="b" style="left:817.80px;top:304.70px;width:351.20px;height:1.00px;background:#d9d6dc;"></div>
<div class="t " style="left:819.90px;top:293.65px;font-size:9.2px;line-height:12px;transform:scaleX(0.8680);color:#0c0c0c;">Streaming Mode</div>
<div class="t " style="left:978.90px;top:293.65px;font-size:9.2px;line-height:12px;transform:scaleX(0.8660);color:#2a2a2a;">RTP/UDP</div>
<div class="b" style="left:802.40px;top:305.70px;width:366.60px;height:12.10px;background:#cbc9cd;"></div>
<svg class="i" style="left:808.4px;top:309.75px" width="4.2" height="4.2" viewBox="0 0 4 4"><path d="M4 0V4H0z" fill="#3a3a3a"/></svg>
<div class="t " style="left:820.40px;top:305.85px;font-size:9.3px;line-height:12px;transform:scaleX(0.9850);color:#0a0a0a;font-weight:bold;">H264 2 - streamed</div>
<div class="b" style="left:817.80px;top:328.90px;width:351.20px;height:1.00px;background:#d9d6dc;"></div>
<div class="t " style="left:819.90px;top:317.85px;font-size:9.2px;line-height:12px;transform:scaleX(0.8680);color:#0c0c0c;">Control priority</div>
<div class="t " style="left:979.20px;top:317.95px;font-size:9.3px;line-height:12px;transform:scaleX(0.9251);color:#0a0a0a;font-weight:bold;">Framerate</div>
<div class="b" style="left:817.80px;top:341.00px;width:351.20px;height:1.00px;background:#d9d6dc;"></div>
<div class="t " style="left:819.90px;top:329.95px;font-size:9.2px;line-height:12px;transform:scaleX(0.8680);color:#0c0c0c;">Frames per second</div>
<div class="t " style="left:978.90px;top:329.95px;font-size:9.2px;line-height:12px;transform:scaleX(0.8660);color:#2a2a2a;">30</div>
<div class="b" style="left:817.80px;top:353.10px;width:351.20px;height:1.00px;background:#d9d6dc;"></div>
<div class="t " style="left:819.90px;top:342.05px;font-size:9.2px;line-height:12px;transform:scaleX(0.8680);color:#0c0c0c;">Max. frames between keyframes</div>
<div class="t " style="left:978.90px;top:342.05px;font-size:9.2px;line-height:12px;transform:scaleX(0.8660);color:#2a2a2a;">30</div>
<div class="b" style="left:817.80px;top:365.20px;width:351.20px;height:1.00px;background:#d9d6dc;"></div>
<div class="t " style="left:819.90px;top:354.15px;font-size:9.2px;line-height:12px;transform:scaleX(0.8680);color:#0c0c0c;">Max. frames between keyframes mode</div>
<div class="t " style="left:978.90px;top:354.15px;font-size:9.2px;line-height:12px;transform:scaleX(0.8660);color:#2a2a2a;">Default (determined by driver)</div>
<div class="b" style="left:817.80px;top:377.30px;width:351.20px;height:1.00px;background:#d9d6dc;"></div>
<div class="t " style="left:819.90px;top:366.25px;font-size:9.2px;line-height:12px;transform:scaleX(0.8680);color:#0c0c0c;">Maximum bit rate (kbit/s)</div>
<div class="t " style="left:979.20px;top:366.35px;font-size:9.3px;line-height:12px;transform:scaleX(1.0344);color:#0a0a0a;font-weight:bold;">1536</div>
<div class="b" style="left:817.80px;top:389.40px;width:351.20px;height:1.00px;background:#d9d6dc;"></div>
<div class="t " style="left:819.90px;top:378.35px;font-size:9.2px;line-height:12px;transform:scaleX(0.8680);color:#0c0c0c;">Minimum bit rate (kbit/s)</div>
<div class="t " style="left:979.20px;top:378.45px;font-size:9.3px;line-height:12px;transform:scaleX(1.0344);color:#0a0a0a;font-weight:bold;">1536</div>
<div class="b" style="left:817.80px;top:401.50px;width:351.20px;height:1.00px;background:#d9d6dc;"></div>
<div class="t " style="left:819.90px;top:390.45px;font-size:9.2px;line-height:12px;transform:scaleX(0.8680);color:#0c0c0c;">Quality</div>
<div class="t " style="left:978.90px;top:390.45px;font-size:9.2px;line-height:12px;transform:scaleX(0.8660);color:#2a2a2a;">Normal</div>
<div class="b" style="left:817.80px;top:413.60px;width:351.20px;height:1.00px;background:#d9d6dc;"></div>
<div class="t " style="left:819.90px;top:402.55px;font-size:9.2px;line-height:12px;transform:scaleX(0.8680);color:#0c0c0c;">Resolution</div>
<div class="t " style="left:979.20px;top:402.65px;font-size:9.3px;line-height:12px;transform:scaleX(1.0054);color:#0a0a0a;font-weight:bold;">640x360</div>
<div class="b" style="left:817.80px;top:425.70px;width:351.20px;height:1.00px;background:#d9d6dc;"></div>
<div class="t " style="left:819.90px;top:414.65px;font-size:9.2px;line-height:12px;transform:scaleX(0.8680);color:#0c0c0c;">Streaming Mode</div>
<div class="t " style="left:978.90px;top:414.65px;font-size:9.2px;line-height:12px;transform:scaleX(0.8660);color:#2a2a2a;">RTP/UDP</div>
<div class="b" style="left:802.40px;top:426.70px;width:366.60px;height:12.10px;background:#cbc9cd;"></div>
<svg class="i" style="left:808.4px;top:430.75px" width="4.2" height="4.2" viewBox="0 0 4 4"><path d="M4 0V4H0z" fill="#3a3a3a"/></svg>
<div class="t " style="left:820.40px;top:426.85px;font-size:9.3px;line-height:12px;transform:scaleX(0.9850);color:#0a0a0a;font-weight:bold;">JPEG - streamed</div>
<div class="b" style="left:817.80px;top:449.90px;width:351.20px;height:1.00px;background:#d9d6dc;"></div>
<div class="t " style="left:819.90px;top:438.85px;font-size:9.2px;line-height:12px;transform:scaleX(0.8680);color:#0c0c0c;">Frames per second</div>
<div class="t " style="left:978.90px;top:438.85px;font-size:9.2px;line-height:12px;transform:scaleX(0.8660);color:#2a2a2a;">8</div>
<div class="b" style="left:817.80px;top:462.00px;width:351.20px;height:1.00px;background:#d9d6dc;"></div>
<div class="t " style="left:819.90px;top:450.95px;font-size:9.2px;line-height:12px;transform:scaleX(0.8680);color:#0c0c0c;">Quality</div>
<div class="t " style="left:979.20px;top:451.05px;font-size:9.3px;line-height:12px;transform:scaleX(0.9637);color:#0a0a0a;font-weight:bold;">1 Fine</div>
<div class="b" style="left:817.80px;top:474.10px;width:351.20px;height:1.00px;background:#d9d6dc;"></div>
<div class="t " style="left:819.90px;top:463.05px;font-size:9.2px;line-height:12px;transform:scaleX(0.8680);color:#0c0c0c;">Resolution</div>
<div class="t " style="left:979.20px;top:463.15px;font-size:9.3px;line-height:12px;transform:scaleX(1.0054);color:#0a0a0a;font-weight:bold;">1280x720</div>
<div class="b" style="left:976.40px;top:184.70px;width:1.00px;height:290.40px;background:#d9d6dc;"></div>
<div class="b" style="left:976.40px;top:184.70px;width:1.00px;height:12.10px;background:#cbc9cd;"></div>
<div class="b" style="left:976.40px;top:305.70px;width:1.00px;height:12.10px;background:#cbc9cd;"></div>
<div class="b" style="left:976.40px;top:426.70px;width:1.00px;height:12.10px;background:#cbc9cd;"></div>
<div class="b" style="left:801.20px;top:509.10px;width:369.20px;height:43.80px;background:#f6f3f7;border:1px solid #b2b0b6"></div>
<div class="t " style="left:804.80px;top:510.40px;font-size:9.3px;line-height:12px;transform:scaleX(0.9340);color:#0a0a0a;font-weight:bold;">Frames per second</div>
<div class="b" style="left:798.00px;top:556.80px;width:377.00px;height:20.00px;background:#fbfafc;"></div>
<div class="b" style="left:798.80px;top:557.20px;width:34.80px;height:14.60px;background:linear-gradient(180deg,#e9e7ec,#dddbe1);border:1px solid #a09ea6;border-bottom:none"></div>
<svg class="i" style="left:801.80px;top:558.60px" width="12" height="12"><use href="#tinfo"/></svg>
<div class="t " style="left:817.00px;top:558.60px;font-size:9.2px;line-height:12px;transform:scaleX(0.8807);color:#1a1a1a;">Info</div>
<svg class="i" style="left:835.60px;top:559.60px" width="12.4" height="12"><use href="#tsettings"/></svg>
<div class="t " style="left:851.60px;top:560.00px;font-size:9.2px;line-height:12px;transform:scaleX(0.8915);color:#1a1a1a;">Settings</div>
<div class="b" style="left:888.50px;top:557.20px;width:50.70px;height:14.60px;background:linear-gradient(180deg,#e9e7ec,#dddbe1);border:1px solid #a09ea6;border-bottom:none"></div>
<svg class="i" style="left:890.40px;top:558.60px" width="10.4" height="12"><use href="#tstreams"/></svg>
<div class="t " style="left:904.00px;top:558.60px;font-size:9.2px;line-height:12px;transform:scaleX(0.8767);color:#1a1a1a;">Streams</div>
<div class="b" style="left:940.60px;top:557.20px;width:48.00px;height:14.60px;background:linear-gradient(180deg,#e9e7ec,#dddbe1);border:1px solid #a09ea6;border-bottom:none"></div>
<svg class="i" style="left:943.20px;top:558.60px" width="10" height="12"><use href="#trecord"/></svg>
<div class="t " style="left:957.60px;top:558.60px;font-size:9.2px;line-height:12px;transform:scaleX(0.8911);color:#1a1a1a;">Record</div>
<div class="b" style="left:989.50px;top:557.20px;width:58.80px;height:14.60px;background:linear-gradient(180deg,#e9e7ec,#dddbe1);border:1px solid #a09ea6;border-bottom:none"></div>
<svg class="i" style="left:991.40px;top:558.60px" width="11.6" height="12"><use href="#tlens"/></svg>
<div class="t " style="left:1007.70px;top:558.60px;font-size:9.2px;line-height:12px;transform:scaleX(0.8557);color:#1a1a1a;">360° Lens</div>
<div class="b" style="left:1049.30px;top:557.20px;width:45.30px;height:14.60px;background:linear-gradient(180deg,#e9e7ec,#dddbe1);border:1px solid #a09ea6;border-bottom:none"></div>
<svg class="i" style="left:1052.00px;top:558.60px" width="9.6" height="12"><use href="#tevents"/></svg>
<div class="t " style="left:1066.00px;top:558.60px;font-size:9.2px;line-height:12px;transform:scaleX(0.8899);color:#1a1a1a;">Events</div>
<div class="b" style="left:1095.60px;top:557.20px;width:43.60px;height:14.60px;background:linear-gradient(180deg,#e9e7ec,#dddbe1);border:1px solid #a09ea6;border-bottom:none"></div>
<svg class="i" style="left:1098.80px;top:558.60px" width="11.4" height="12"><use href="#client"/></svg>
<div class="t " style="left:1113.00px;top:558.60px;font-size:9.2px;line-height:12px;transform:scaleX(0.9277);color:#1a1a1a;">Client</div>
<svg class="i" style="left:1141.70px;top:559.30px" width="7.8" height="9.6"><use href="#tgrid"/></svg>
<div class="b" style="left:1150.70px;top:559.60px;width:10.40px;height:10.00px;background:linear-gradient(180deg,#f8f8fa,#d8d8dc);border:1px solid #b0b0b6"></div>
<svg class="i" style="left:1153.1px;top:561px" width="5.6" height="7.2" viewBox="0 0 5.4 7.2"><path d="M3.6 1.4 L1.4 3.6 L3.6 5.8" stroke="#666" stroke-width="1.3" fill="none"/></svg>
<div class="b" style="left:1163.20px;top:559.60px;width:10.40px;height:10.00px;background:linear-gradient(180deg,#f8f8fa,#d8d8dc);border:1px solid #b0b0b6"></div>
<svg class="i" style="left:1165.6px;top:561px" width="5.6" height="7.2" viewBox="0 0 5.4 7.2"><path d="M1.8 1.4 L4 3.6 L1.8 5.8" stroke="#111" stroke-width="1.3" fill="none"/></svg>
<div class="b" style="left:789.00px;top:571.60px;width:3.20px;height:5.40px;background:#7f8f9c;"></div>
<div class="b" style="left:413.50px;top:577.00px;width:761.50px;height:2.00px;background:#56636c;"></div>
<div class="b" style="left:413.50px;top:579.00px;width:2.60px;height:12.00px;background:#5d6a74;"></div>
<div class="b" style="left:416.00px;top:579.00px;width:759.00px;height:12.00px;background:linear-gradient(180deg,#d3deec,#c2d0e2);"></div>
<div class="t " style="left:421.60px;top:577.50px;font-size:9.6px;line-height:12px;transform:scaleX(0.8469);color:#1a1a3a;">Preview</div>
<svg class="i" style="left:1153.00px;top:580.50px" width="9" height="9"><use href="#pin"/></svg>
<div class="b" style="left:1163.00px;top:579.20px;width:11.00px;height:11.00px;background:linear-gradient(180deg,#e8a8a0,#c8402e);border:1px solid #6a2a38"></div>
<svg class="i" style="left:1165px;top:581.4px" width="7" height="7" viewBox="0 0 7 7"><path d="M.8 .8L6.2 6.2M6.2 .8L.8 6.2" stroke="#fff" stroke-width="1.5"/></svg>
<div class="t " style="left:744.60px;top:815.40px;font-size:8.6px;line-height:12px;transform:scaleX(0.8841);color:#111;">Employee driveway - Camera 1</div>
<div class="b" style="left:208.00px;top:826.60px;width:967.00px;height:2.60px;background:#364a56;"></div>
<svg class="i" style="left:612px;top:602px" width="379" height="213.6" viewBox="0 0 379 213.6"><defs><linearGradient id="pv" x1="0" y1="0" x2="1" y2="0"><stop offset="0" stop-color="#5a4b52"/><stop offset=".5" stop-color="#5e4e55"/><stop offset="1" stop-color="#62545a"/></linearGradient><linearGradient id="pv2" x1="0" y1="0" x2="0" y2="1"><stop offset="0" stop-color="#4a444a" stop-opacity=".55"/><stop offset=".35" stop-color="#4a444a" stop-opacity="0"/></linearGradient><filter id="bl" x="-5%" y="-5%" width="110%" height="110%"><feGaussianBlur stdDeviation=".7"/></filter><filter id="bl2" x="-5%" y="-5%" width="110%" height="110%"><feGaussianBlur stdDeviation="1.6"/></filter><filter id="nz" x="0" y="0" width="100%" height="100%"><feTurbulence type="fractalNoise" baseFrequency=".9" numOctaves="2" seed="3"/><feColorMatrix values="0 0 0 0 .5  0 0 0 0 .5  0 0 0 0 .5  .9 .9 .9 0 -1.0"/></filter><clipPath id="pc"><rect width="379" height="213.6"/></clipPath></defs><g clip-path="url(#pc)"><rect x="0.0" y="0.0" width="379.0" height="213.6" fill="url(#pv)" /><rect x="0.0" y="60.0" width="379.0" height="153.6" fill="url(#pv2)" /><path d="M226 96 L379 84 L379 166 L304 163 L262 140z" fill="#61616a" filter="url(#bl2)"/><path d="M300 70 L379 70 L379 96 L330 100z" fill="#6a6068" filter="url(#bl2)" opacity=".7"/><g filter="url(#bl)"><linearGradient id="lb" x1="0" y1="0" x2="0" y2="1"><stop offset="0" stop-color="#5a4a44" stop-opacity="0"/><stop offset=".4" stop-color="#57483f" stop-opacity=".85"/><stop offset="1" stop-color="#4a3f42"/></linearGradient><linearGradient id="ub" x1="0" y1="0" x2="0" y2="1"><stop offset="0" stop-color="#a88c62"/><stop offset=".55" stop-color="#7f6850"/><stop offset="1" stop-color="#473c3a"/></linearGradient><rect x="0.0" y="0.0" width="379.0" height="58.0" fill="#e7dbb2" /><rect x="0.0" y="0.0" width="24.0" height="40.0" fill="#efe5bc" /><rect x="60.0" y="0.0" width="34.0" height="22.0" fill="#f5efd8" /><rect x="24.0" y="0.0" width="36.0" height="9.5" fill="#8c7c52" /><rect x="0.0" y="9.5" width="60.0" height="3.0" fill="#f4eed8" /><rect x="150.0" y="0.0" width="100.0" height="34.0" fill="#ecdcA4" /><rect x="176.0" y="4.0" width="56.0" height="22.0" fill="#f3ead0" /><rect x="200.0" y="0.0" width="26.0" height="8.0" fill="#d2b878" /><rect x="228.0" y="2.0" width="24.0" height="14.0" fill="#dcc078" /><rect x="250.0" y="0.0" width="129.0" height="20.0" fill="#eee4c0" /><rect x="262.0" y="0.0" width="40.0" height="8.0" fill="#f6f0dc" /><rect x="336.0" y="0.0" width="43.0" height="10.0" fill="#d8c494" /><path d="M62.0 22.0 L94.0 30.0 L94.0 50.0 L62.0 46.0z" fill="#c4ae86" /><path d="M95.0 22.0 L160.0 22.0 L160.0 56.0 L95.0 58.0z" fill="url(#ub)" /><path d="M250.0 18.0 L268.0 16.0 L268.0 46.0 L250.0 44.0z" fill="#6c6446" /><path d="M266.0 20.0 L300.0 17.0 L338.0 20.0 L338.0 50.0 L300.0 48.0 L266.0 46.0z" fill="#8a8068" /><path d="M336.0 20.0 L352.0 16.0 L379.0 19.0 L379.0 52.0 L352.0 56.0 L338.0 50.0z" fill="#453d36" /><ellipse cx="289.3" cy="21.9" rx="1.6" ry="0.7" fill="#d8cca0" opacity=".7"/><ellipse cx="292.3" cy="19.5" rx="1.4" ry="0.6" fill="#3a3630" opacity=".7"/><ellipse cx="296.1" cy="24.3" rx="1.5" ry="0.6" fill="#d8cca0" opacity=".7"/><ellipse cx="334.2" cy="34.4" rx="1.5" ry="0.6" fill="#3a3630" opacity=".7"/><ellipse cx="269.6" cy="23.7" rx="1.5" ry="0.7" fill="#3a3630" opacity=".7"/><ellipse cx="276.4" cy="21.1" rx="1.2" ry="1.3" fill="#a89870" opacity=".7"/><ellipse cx="273.4" cy="32.9" rx="1.0" ry="0.7" fill="#d8cca0" opacity=".7"/><ellipse cx="306.6" cy="34.1" rx="1.4" ry="1.0" fill="#efe6c8" opacity=".7"/><ellipse cx="299.5" cy="42.0" rx="1.2" ry="0.8" fill="#a89870" opacity=".7"/><ellipse cx="316.3" cy="24.3" rx="1.5" ry="1.0" fill="#efe6c8" opacity=".7"/><ellipse cx="318.5" cy="25.5" rx="2.0" ry="0.7" fill="#3a3630" opacity=".7"/><ellipse cx="277.9" cy="26.9" rx="1.9" ry="0.9" fill="#d8cca0" opacity=".7"/><ellipse cx="321.0" cy="32.9" rx="1.9" ry="0.9" fill="#efe6c8" opacity=".7"/><ellipse cx="308.8" cy="33.1" rx="1.3" ry="1.3" fill="#efe6c8" opacity=".7"/><ellipse cx="300.1" cy="35.3" rx="0.9" ry="1.2" fill="#3a3630" opacity=".7"/><ellipse cx="286.5" cy="28.0" rx="1.6" ry="0.6" fill="#3a3630" opacity=".7"/><ellipse cx="291.6" cy="33.9" rx="1.4" ry="0.8" fill="#efe6c8" opacity=".7"/><ellipse cx="275.3" cy="24.4" rx="1.3" ry="1.3" fill="#d8cca0" opacity=".7"/><ellipse cx="278.0" cy="28.4" rx="1.1" ry="0.7" fill="#3a3630" opacity=".7"/><ellipse cx="328.2" cy="25.2" rx="1.3" ry="0.9" fill="#3a3630" opacity=".7"/><ellipse cx="335.0" cy="21.9" rx="1.0" ry="0.8" fill="#a89870" opacity=".7"/><ellipse cx="266.9" cy="39.6" rx="1.0" ry="0.8" fill="#a89870" opacity=".7"/><ellipse cx="296.2" cy="27.6" rx="1.5" ry="1.4" fill="#d8cca0" opacity=".7"/><ellipse cx="298.9" cy="40.6" rx="1.9" ry="1.1" fill="#3a3630" opacity=".7"/><ellipse cx="294.7" cy="28.2" rx="1.4" ry="0.9" fill="#a89870" opacity=".7"/><ellipse cx="270.8" cy="23.4" rx="1.0" ry="0.9" fill="#d8cca0" opacity=".7"/><ellipse cx="273.4" cy="32.7" rx="1.4" ry="1.4" fill="#d8cca0" opacity=".7"/><ellipse cx="271.1" cy="23.4" rx="1.3" ry="1.1" fill="#efe6c8" opacity=".7"/><ellipse cx="309.4" cy="30.3" rx="0.9" ry="1.0" fill="#3a3630" opacity=".7"/><ellipse cx="300.6" cy="26.1" rx="1.0" ry="1.2" fill="#efe6c8" opacity=".7"/><ellipse cx="300.5" cy="36.0" rx="1.4" ry="0.8" fill="#efe6c8" opacity=".7"/><ellipse cx="276.6" cy="32.1" rx="0.8" ry="1.0" fill="#d8cca0" opacity=".7"/><ellipse cx="316.1" cy="24.8" rx="1.2" ry="0.7" fill="#a89870" opacity=".7"/><ellipse cx="304.3" cy="38.3" rx="1.2" ry="0.8" fill="#a89870" opacity=".7"/><ellipse cx="324.0" cy="39.3" rx="1.7" ry="0.8" fill="#3a3630" opacity=".7"/><ellipse cx="291.6" cy="18.8" rx="0.8" ry="0.8" fill="#efe6c8" opacity=".7"/><ellipse cx="279.9" cy="33.7" rx="1.2" ry="1.2" fill="#efe6c8" opacity=".7"/><ellipse cx="334.8" cy="27.5" rx="1.1" ry="0.8" fill="#a89870" opacity=".7"/><ellipse cx="290.3" cy="30.5" rx="2.0" ry="1.1" fill="#d8cca0" opacity=".7"/><ellipse cx="300.5" cy="35.0" rx="1.8" ry="0.7" fill="#d8cca0" opacity=".7"/><rect x="0.0" y="40.0" width="62.0" height="40.0" fill="url(#lb)" /><path d="M52.9 54.1 L56.9 34.1 L61.0 5.7" fill="none" stroke="#503828" stroke-width="0.7428173746700588" opacity=".8"/><path d="M46.2 46.0 L51.0 26.0 L55.8 11.7" fill="none" stroke="#503828" stroke-width="0.9166707960555585" opacity=".8"/><path d="M24.5 57.0 L28.1 37.0 L31.7 2.0" fill="none" stroke="#503828" stroke-width="0.7016306938382915" opacity=".8"/><path d="M10.5 56.3 L15.4 36.3 L20.3 1.8" fill="none" stroke="#503828" stroke-width="1.2612083828203096" opacity=".8"/><path d="M56.9 51.8 L54.5 31.8 L52.1 6.6" fill="none" stroke="#503828" stroke-width="0.7047870816075603" opacity=".8"/><path d="M2.8 57.5 L5.2 37.5 L7.6 6.3" fill="none" stroke="#503828" stroke-width="1.3468998440459412" opacity=".8"/><path d="M26.3 55.7 L31.5 35.7 L36.7 2.5" fill="none" stroke="#503828" stroke-width="0.801467849092363" opacity=".8"/><path d="M18.4 44.3 L19.8 24.3 L21.2 3.1" fill="none" stroke="#503828" stroke-width="0.9352100422036349" opacity=".8"/><path d="M9.3 56.4 L7.0 36.4 L4.7 5.5" fill="none" stroke="#503828" stroke-width="1.06667901763348" opacity=".8"/><path d="M52.6 47.6 L59.3 27.6 L66.0 6.0" fill="none" stroke="#503828" stroke-width="1.025459969948747" opacity=".8"/><path d="M31.3 40.3 L30.4 20.3 L29.4 2.2" fill="none" stroke="#503828" stroke-width="0.6031459854605136" opacity=".8"/><path d="M46.8 43.1 L46.3 23.1 L45.9 8.7" fill="none" stroke="#503828" stroke-width="1.0451804999217704" opacity=".8"/><path d="M20.3 49.3 L21.1 29.3 L22.0 9.4" fill="none" stroke="#503828" stroke-width="0.6848875336839426" opacity=".8"/><path d="M33.4 44.5 L29.8 24.5 L26.2 9.3" fill="none" stroke="#503828" stroke-width="1.0061711934338564" opacity=".8"/><path d="M33.5 53.7 L40.1 33.7 L46.7 5.3" fill="none" stroke="#503828" stroke-width="1.0900223074755682" opacity=".8"/><path d="M30.3 49.2 L33.4 29.2 L36.5 5.4" fill="none" stroke="#503828" stroke-width="1.0266283500633366" opacity=".8"/><path d="M28.8 56.9 L32.0 36.9 L35.1 10.5" fill="none" stroke="#503828" stroke-width="1.3537444706428605" opacity=".8"/><path d="M16.5 50.1 L23.6 30.1 L30.7 10.1" fill="none" stroke="#503828" stroke-width="0.7097075487174811" opacity=".8"/><path d="M8.8 48.0 L2.0 28.0 L-4.9 2.9" fill="none" stroke="#503828" stroke-width="0.6584966135781395" opacity=".8"/><path d="M39.5 54.1 L45.8 34.1 L52.2 1.9" fill="none" stroke="#503828" stroke-width="1.1728959062305568" opacity=".8"/><path d="M39.0 42.6 L45.1 22.6 L51.2 11.6" fill="none" stroke="#503828" stroke-width="0.7756702646415357" opacity=".8"/><path d="M55.3 47.2 L55.1 27.2 L54.9 11.9" fill="none" stroke="#503828" stroke-width="1.265955735586358" opacity=".8"/><path d="M11.0 47.8 L11.3 27.8 L11.5 4.1" fill="none" stroke="#503828" stroke-width="0.7565957329071449" opacity=".8"/><path d="M19.8 53.0 L12.1 33.0 L4.5 6.6" fill="none" stroke="#503828" stroke-width="0.9523664814421615" opacity=".8"/><path d="M3.0 46.0 L5.0 26.0 L7.0 6.1" fill="none" stroke="#503828" stroke-width="0.6514326340726014" opacity=".8"/><path d="M57.2 54.2 L64.7 34.2 L72.3 1.3" fill="none" stroke="#503828" stroke-width="0.8124514178748158" opacity=".8"/><path d="M4.2 54.0 L0.5 34.0 L-3.1 1.6" fill="none" stroke="#503828" stroke-width="0.9378033450221288" opacity=".8"/><path d="M53.0 54.7 L49.2 34.7 L45.3 1.8" fill="none" stroke="#503828" stroke-width="1.335337206809417" opacity=".8"/><path d="M34.0 52.6 L27.4 32.6 L20.8 0.7" fill="none" stroke="#503828" stroke-width="1.1505644570788385" opacity=".8"/><path d="M25.8 41.3 L32.8 21.3 L39.8 7.6" fill="none" stroke="#503828" stroke-width="1.2413028732571116" opacity=".8"/><path d="M6.7 55.4 L-0.2 35.4 L-7.2 10.4" fill="none" stroke="#503828" stroke-width="0.9630188167783398" opacity=".8"/><path d="M21.0 50.0 L27.8 30.0 L34.6 3.2" fill="none" stroke="#503828" stroke-width="0.7033798399162631" opacity=".8"/><path d="M31.5 44.3 L25.3 24.3 L19.0 1.9" fill="none" stroke="#503828" stroke-width="0.640303773767626" opacity=".8"/><path d="M13.3 45.6 L10.2 25.6 L7.1 9.1" fill="none" stroke="#503828" stroke-width="0.8319686677794865" opacity=".8"/><path d="M30.0 43.2 L27.6 23.2 L25.1 0.2" fill="none" stroke="#503828" stroke-width="0.800359004956182" opacity=".8"/><path d="M2.9 53.2 L3.7 33.2 L4.5 2.3" fill="none" stroke="#503828" stroke-width="0.979808510814187" opacity=".8"/><path d="M54.3 41.9 L59.4 21.9 L64.5 5.2" fill="none" stroke="#503828" stroke-width="0.9960012587660922" opacity=".8"/><path d="M48.7 47.1 L48.8 27.1 L49.0 8.3" fill="none" stroke="#503828" stroke-width="1.3859524323318375" opacity=".8"/><path d="M21.2 55.0 L24.5 35.0 L27.8 7.6" fill="none" stroke="#503828" stroke-width="0.923758166965473" opacity=".8"/><path d="M21.5 41.0 L15.5 21.0 L9.6 0.8" fill="none" stroke="#503828" stroke-width="1.192711358546342" opacity=".8"/><path d="M16.3 42.9 L9.7 22.9 L3.0 10.1" fill="none" stroke="#503828" stroke-width="1.2964302569981985" opacity=".8"/><path d="M39.6 45.1 L35.4 25.1 L31.3 3.5" fill="none" stroke="#503828" stroke-width="0.9675623547157766" opacity=".8"/><path d="M10.8 48.0 L7.0 28.0 L3.2 11.5" fill="none" stroke="#503828" stroke-width="1.378098398357101" opacity=".8"/><path d="M32.6 44.4 L40.1 24.4 L47.5 3.7" fill="none" stroke="#503828" stroke-width="0.8852671336111896" opacity=".8"/><path d="M2.1 46.9 L1.7 26.9 L1.2 6.0" fill="none" stroke="#503828" stroke-width="0.7607840433608257" opacity=".8"/><path d="M30.3 40.1 L26.5 20.1 L22.7 1.1" fill="none" stroke="#503828" stroke-width="0.9196089362311406" opacity=".8"/><ellipse cx="154.2" cy="2.7" rx="1.2" ry="0.8" fill="#7a5a38" opacity=".75"/><ellipse cx="245.8" cy="29.3" rx="1.0" ry="1.5" fill="#7a5a38" opacity=".75"/><ellipse cx="189.0" cy="12.4" rx="2.2" ry="0.7" fill="#7a5a38" opacity=".75"/><ellipse cx="214.3" cy="3.4" rx="2.0" ry="1.5" fill="#f8f2dc" opacity=".75"/><ellipse cx="223.4" cy="28.0" rx="1.0" ry="1.1" fill="#7a5a38" opacity=".75"/><ellipse cx="206.8" cy="28.0" rx="0.8" ry="1.3" fill="#d8b060" opacity=".75"/><ellipse cx="158.5" cy="3.3" rx="1.7" ry="1.6" fill="#f8f2dc" opacity=".75"/><ellipse cx="233.6" cy="19.9" rx="1.7" ry="1.2" fill="#d8b060" opacity=".75"/><ellipse cx="198.9" cy="2.1" rx="1.9" ry="1.3" fill="#7a5a38" opacity=".75"/><ellipse cx="239.8" cy="4.9" rx="1.5" ry="1.3" fill="#f8f2dc" opacity=".75"/><ellipse cx="175.2" cy="4.4" rx="1.2" ry="1.3" fill="#d8b060" opacity=".75"/><ellipse cx="173.1" cy="22.8" rx="1.4" ry="1.4" fill="#c89848" opacity=".75"/><ellipse cx="197.9" cy="23.9" rx="1.9" ry="1.2" fill="#d8b060" opacity=".75"/><ellipse cx="157.7" cy="6.7" rx="1.2" ry="1.3" fill="#a87838" opacity=".75"/><ellipse cx="212.1" cy="6.3" rx="1.5" ry="1.1" fill="#c89848" opacity=".75"/><ellipse cx="219.2" cy="23.6" rx="1.2" ry="1.1" fill="#f8f2dc" opacity=".75"/><ellipse cx="196.6" cy="26.5" rx="2.2" ry="1.1" fill="#a87838" opacity=".75"/><ellipse cx="247.8" cy="32.0" rx="0.8" ry="1.1" fill="#7a5a38" opacity=".75"/><ellipse cx="246.8" cy="16.4" rx="1.2" ry="0.8" fill="#d8b060" opacity=".75"/><ellipse cx="157.5" cy="4.9" rx="1.8" ry="0.9" fill="#a87838" opacity=".75"/><ellipse cx="163.3" cy="28.2" rx="1.5" ry="1.5" fill="#a87838" opacity=".75"/><ellipse cx="173.1" cy="30.7" rx="1.5" ry="0.6" fill="#c89848" opacity=".75"/><ellipse cx="245.0" cy="23.8" rx="1.4" ry="1.3" fill="#f8f2dc" opacity=".75"/><ellipse cx="184.4" cy="12.1" rx="2.0" ry="0.6" fill="#a87838" opacity=".75"/><ellipse cx="233.9" cy="5.8" rx="2.1" ry="1.3" fill="#a87838" opacity=".75"/><ellipse cx="175.3" cy="4.1" rx="1.3" ry="1.5" fill="#c89848" opacity=".75"/><ellipse cx="186.1" cy="15.7" rx="1.2" ry="0.6" fill="#c89848" opacity=".75"/><ellipse cx="155.2" cy="23.2" rx="1.7" ry="0.7" fill="#a87838" opacity=".75"/><ellipse cx="193.6" cy="12.1" rx="1.9" ry="1.4" fill="#f8f2dc" opacity=".75"/><ellipse cx="238.4" cy="28.0" rx="1.7" ry="1.5" fill="#7a5a38" opacity=".75"/><ellipse cx="204.9" cy="25.0" rx="0.9" ry="1.3" fill="#f8f2dc" opacity=".75"/><ellipse cx="211.5" cy="6.4" rx="2.0" ry="1.1" fill="#7a5a38" opacity=".75"/><ellipse cx="162.7" cy="17.1" rx="1.3" ry="0.9" fill="#a87838" opacity=".75"/><ellipse cx="190.6" cy="9.6" rx="1.5" ry="1.3" fill="#c89848" opacity=".75"/><ellipse cx="166.7" cy="7.2" rx="1.1" ry="1.5" fill="#f8f2dc" opacity=".75"/><ellipse cx="205.0" cy="16.5" rx="1.3" ry="1.4" fill="#f8f2dc" opacity=".75"/><ellipse cx="164.0" cy="8.2" rx="0.9" ry="0.9" fill="#c89848" opacity=".75"/><ellipse cx="181.9" cy="13.8" rx="1.9" ry="0.8" fill="#c89848" opacity=".75"/><ellipse cx="225.0" cy="15.2" rx="1.4" ry="1.1" fill="#f8f2dc" opacity=".75"/><ellipse cx="177.0" cy="26.1" rx="1.5" ry="1.2" fill="#a87838" opacity=".75"/><ellipse cx="162.6" cy="18.1" rx="1.7" ry="1.5" fill="#d8b060" opacity=".75"/><ellipse cx="159.3" cy="30.7" rx="1.3" ry="1.2" fill="#f8f2dc" opacity=".75"/><ellipse cx="245.4" cy="29.2" rx="2.0" ry="0.6" fill="#c89848" opacity=".75"/><ellipse cx="192.5" cy="26.4" rx="1.9" ry="1.6" fill="#f8f2dc" opacity=".75"/><ellipse cx="150.0" cy="14.5" rx="2.1" ry="1.4" fill="#f8f2dc" opacity=".75"/><ellipse cx="247.2" cy="10.0" rx="1.0" ry="0.8" fill="#7a5a38" opacity=".75"/><ellipse cx="247.2" cy="5.5" rx="2.0" ry="1.3" fill="#f8f2dc" opacity=".75"/><ellipse cx="158.5" cy="26.9" rx="0.8" ry="0.7" fill="#7a5a38" opacity=".75"/><ellipse cx="242.0" cy="22.7" rx="1.2" ry="0.7" fill="#a87838" opacity=".75"/><ellipse cx="202.8" cy="16.0" rx="1.9" ry="0.7" fill="#a87838" opacity=".75"/><ellipse cx="202.4" cy="20.7" rx="1.3" ry="0.8" fill="#7a5a38" opacity=".75"/><ellipse cx="150.1" cy="19.2" rx="2.2" ry="0.9" fill="#a87838" opacity=".75"/><ellipse cx="214.5" cy="30.3" rx="1.5" ry="0.8" fill="#d8b060" opacity=".75"/><ellipse cx="152.9" cy="15.2" rx="1.7" ry="0.7" fill="#d8b060" opacity=".75"/><ellipse cx="199.8" cy="23.6" rx="1.4" ry="0.9" fill="#f8f2dc" opacity=".75"/><ellipse cx="242.5" cy="9.3" rx="0.8" ry="0.9" fill="#f8f2dc" opacity=".75"/><ellipse cx="186.2" cy="14.7" rx="0.8" ry="0.9" fill="#7a5a38" opacity=".75"/><ellipse cx="156.7" cy="17.9" rx="1.1" ry="1.4" fill="#d8b060" opacity=".75"/><ellipse cx="173.1" cy="9.1" rx="1.9" ry="0.9" fill="#7a5a38" opacity=".75"/><ellipse cx="199.6" cy="8.0" rx="1.1" ry="1.0" fill="#c89848" opacity=".75"/><path d="M372.4 12.0 L370.7 3.9" fill="none" stroke="#6a5238" stroke-width="1.084471822959753" opacity=".7"/><path d="M268.3 10.7 L261.3 0.8" fill="none" stroke="#6a5238" stroke-width="1.0389004441143634" opacity=".7"/><path d="M364.0 20.3 L371.9 4.9" fill="none" stroke="#6a5238" stroke-width="0.6975456559241572" opacity=".7"/><path d="M273.9 23.1 L277.9 16.8" fill="none" stroke="#6a5238" stroke-width="0.8986579182388365" opacity=".7"/><path d="M298.8 15.2 L296.1 7.5" fill="none" stroke="#6a5238" stroke-width="0.5017224345128626" opacity=".7"/><path d="M286.1 14.9 L293.4 7.7" fill="none" stroke="#6a5238" stroke-width="1.0785627294725404" opacity=".7"/><path d="M276.8 15.0 L281.9 0.8" fill="none" stroke="#6a5238" stroke-width="0.7594696004141581" opacity=".7"/><path d="M256.4 16.6 L254.3 1.4" fill="none" stroke="#6a5238" stroke-width="0.6158157124667281" opacity=".7"/><path d="M297.0 22.6 L289.5 12.4" fill="none" stroke="#6a5238" stroke-width="0.9870947165432944" opacity=".7"/><path d="M348.9 10.6 L341.5 3.9" fill="none" stroke="#6a5238" stroke-width="1.0520460325271066" opacity=".7"/><path d="M283.2 20.5 L289.5 11.1" fill="none" stroke="#6a5238" stroke-width="0.663388797648121" opacity=".7"/><path d="M373.5 18.6 L369.7 5.5" fill="none" stroke="#6a5238" stroke-width="0.6898901786993209" opacity=".7"/><path d="M285.6 10.1 L289.6 -5.1" fill="none" stroke="#6a5238" stroke-width="0.8803880257002461" opacity=".7"/><path d="M371.7 10.3 L367.4 -0.4" fill="none" stroke="#6a5238" stroke-width="1.0740665903646227" opacity=".7"/><path d="M373.1 15.4 L369.1 5.1" fill="none" stroke="#6a5238" stroke-width="0.7960843062372831" opacity=".7"/><path d="M369.7 12.6 L374.6 -0.8" fill="none" stroke="#6a5238" stroke-width="0.9936531515066771" opacity=".7"/><path d="M349.7 18.5 L346.9 9.3" fill="none" stroke="#6a5238" stroke-width="0.7171150644890951" opacity=".7"/><path d="M350.9 11.1 L346.1 -2.4" fill="none" stroke="#6a5238" stroke-width="0.648384507333145" opacity=".7"/><path d="M258.4 10.5 L259.2 1.2" fill="none" stroke="#6a5238" stroke-width="1.08815346252868" opacity=".7"/><path d="M364.0 23.8 L360.2 17.0" fill="none" stroke="#6a5238" stroke-width="0.5578535471307945" opacity=".7"/><path d="M314.3 19.9 L313.5 11.6" fill="none" stroke="#6a5238" stroke-width="0.7501043787341882" opacity=".7"/><path d="M330.0 19.4 L334.0 5.0" fill="none" stroke="#6a5238" stroke-width="0.8986551333646475" opacity=".7"/><path d="M265.6 21.8 L262.3 10.1" fill="none" stroke="#6a5238" stroke-width="0.7237826224597834" opacity=".7"/><path d="M345.2 12.8 L341.2 4.3" fill="none" stroke="#6a5238" stroke-width="0.5919933197558854" opacity=".7"/><path d="M364.1 18.1 L361.3 8.1" fill="none" stroke="#6a5238" stroke-width="1.095469235983264" opacity=".7"/><path d="M315.4 13.2 L320.4 0.7" fill="none" stroke="#6a5238" stroke-width="1.0945733906493627" opacity=".7"/><path d="M263.2 16.6 L268.3 2.2" fill="none" stroke="#6a5238" stroke-width="1.0486253322983219" opacity=".7"/><path d="M255.2 14.1 L249.1 6.2" fill="none" stroke="#6a5238" stroke-width="1.0837791077550876" opacity=".7"/><path d="M325.2 23.0 L323.2 8.4" fill="none" stroke="#6a5238" stroke-width="0.7694683146612742" opacity=".7"/><path d="M283.5 20.9 L290.7 13.8" fill="none" stroke="#6a5238" stroke-width="0.8576882394092058" opacity=".7"/><path d="M135.2 43.5 L133.6 31.8" fill="none" stroke="#4a3428" stroke-width="0.7019882187242573" opacity=".8"/><path d="M113.3 49.6 L115.1 37.1" fill="none" stroke="#4a3428" stroke-width="0.6056899183200043" opacity=".8"/><path d="M117.6 50.9 L113.9 37.1" fill="none" stroke="#4a3428" stroke-width="0.7017038860599196" opacity=".8"/><path d="M145.7 48.8 L140.5 37.6" fill="none" stroke="#4a3428" stroke-width="0.7976483563483746" opacity=".8"/><path d="M131.0 50.2 L126.1 38.3" fill="none" stroke="#4a3428" stroke-width="0.9477029437987763" opacity=".8"/><path d="M122.6 44.5 L120.3 23.1" fill="none" stroke="#4a3428" stroke-width="0.7561809433450459" opacity=".8"/><path d="M132.0 45.7 L131.0 25.3" fill="none" stroke="#4a3428" stroke-width="1.0983101777815074" opacity=".8"/><path d="M119.8 43.2 L122.6 30.7" fill="none" stroke="#4a3428" stroke-width="0.6029382982632675" opacity=".8"/><path d="M152.1 46.8 L155.9 31.9" fill="none" stroke="#4a3428" stroke-width="1.0414189732250838" opacity=".8"/><path d="M125.7 42.6 L119.8 26.0" fill="none" stroke="#4a3428" stroke-width="0.9203333460035482" opacity=".8"/><path d="M152.6 41.4 L154.1 27.0" fill="none" stroke="#4a3428" stroke-width="0.8522315314847442" opacity=".8"/><path d="M106.8 44.5 L107.0 23.4" fill="none" stroke="#4a3428" stroke-width="0.6543964221467627" opacity=".8"/><path d="M127.4 52.9 L133.0 40.5" fill="none" stroke="#4a3428" stroke-width="0.6633251772720079" opacity=".8"/><path d="M154.6 55.6 L154.4 45.0" fill="none" stroke="#4a3428" stroke-width="1.0630839066072097" opacity=".8"/><path d="M121.3 54.5 L122.7 34.6" fill="none" stroke="#4a3428" stroke-width="0.6801380747568772" opacity=".8"/><path d="M145.1 43.6 L144.0 23.4" fill="none" stroke="#4a3428" stroke-width="1.0145938510930361" opacity=".8"/><path d="M109.0 43.5 L107.8 27.3" fill="none" stroke="#4a3428" stroke-width="0.7917881867260026" opacity=".8"/><path d="M105.4 44.0 L108.1 23.2" fill="none" stroke="#4a3428" stroke-width="0.6205495166922455" opacity=".8"/><ellipse cx="34.6" cy="71.6" rx="0.8" ry="1.1" fill="#d8d4e8" /><ellipse cx="24.6" cy="66.2" rx="1.6" ry="1.1" fill="#6a5a7a" /><ellipse cx="19.9" cy="62.5" rx="1.2" ry="0.8" fill="#6a5a7a" /><ellipse cx="12.4" cy="58.1" rx="1.8" ry="0.9" fill="#6a5a7a" /><ellipse cx="46.3" cy="72.0" rx="1.3" ry="0.7" fill="#6a5a7a" /><ellipse cx="25.2" cy="59.2" rx="1.2" ry="0.8" fill="#6a5a7a" /><ellipse cx="31.3" cy="69.8" rx="0.8" ry="0.7" fill="#f0f0f4" /><ellipse cx="47.1" cy="67.2" rx="0.9" ry="0.9" fill="#6a5a7a" /><ellipse cx="39.9" cy="72.1" rx="0.8" ry="0.6" fill="#d8d4e8" /><ellipse cx="13.2" cy="75.7" rx="1.3" ry="1.2" fill="#9a8ab8" /><ellipse cx="41.8" cy="71.0" rx="1.0" ry="1.1" fill="#f0f0f4" /><ellipse cx="11.2" cy="74.1" rx="1.1" ry="1.1" fill="#9a8ab8" /><ellipse cx="16.7" cy="75.4" rx="1.3" ry="1.0" fill="#9a8ab8" /><ellipse cx="20.5" cy="58.7" rx="1.0" ry="0.7" fill="#f0f0f4" /><ellipse cx="41.4" cy="74.1" rx="1.0" ry="1.1" fill="#d8d4e8" /><ellipse cx="46.6" cy="58.9" rx="1.7" ry="1.2" fill="#6a5a7a" /><ellipse cx="34.2" cy="68.4" rx="1.7" ry="0.7" fill="#6a5a7a" /><ellipse cx="44.8" cy="64.7" rx="1.2" ry="0.8" fill="#9a8ab8" /><ellipse cx="22.9" cy="71.8" rx="1.2" ry="0.7" fill="#d8d4e8" /><ellipse cx="19.2" cy="67.3" rx="1.1" ry="1.2" fill="#f0f0f4" /><ellipse cx="44.5" cy="71.4" rx="1.0" ry="0.8" fill="#6a5a7a" /><ellipse cx="26.2" cy="64.6" rx="0.8" ry="0.9" fill="#d8d4e8" /><ellipse cx="3.3" cy="58.0" rx="1.2" ry="0.7" fill="#f0f0f4" /><ellipse cx="33.0" cy="65.4" rx="1.1" ry="0.7" fill="#f0f0f4" /><ellipse cx="38.2" cy="66.5" rx="0.9" ry="1.2" fill="#9a8ab8" /><ellipse cx="43.0" cy="66.1" rx="0.9" ry="0.7" fill="#f0f0f4" /><ellipse cx="25.3" cy="62.8" rx="0.8" ry="1.0" fill="#f0f0f4" /><ellipse cx="36.5" cy="68.4" rx="1.4" ry="0.9" fill="#6a5a7a" /><ellipse cx="16.4" cy="74.3" rx="0.8" ry="0.9" fill="#6a5a7a" /><ellipse cx="12.8" cy="60.9" rx="1.7" ry="0.7" fill="#9a8ab8" /><ellipse cx="10.3" cy="61.6" rx="1.4" ry="0.9" fill="#6a5a7a" /><ellipse cx="49.2" cy="61.1" rx="1.1" ry="0.8" fill="#d8d4e8" /><ellipse cx="59.7" cy="71.0" rx="1.3" ry="0.9" fill="#6a5a7a" /><ellipse cx="51.0" cy="71.4" rx="1.3" ry="1.0" fill="#6a5a7a" /><ellipse cx="12.2" cy="75.9" rx="1.1" ry="1.0" fill="#d8d4e8" /><ellipse cx="21.5" cy="71.5" rx="1.5" ry="1.1" fill="#d8d4e8" /><ellipse cx="17.4" cy="68.0" rx="1.2" ry="1.1" fill="#f0f0f4" /><ellipse cx="19.1" cy="74.7" rx="1.7" ry="0.7" fill="#d8d4e8" /><ellipse cx="11.8" cy="74.3" rx="1.6" ry="0.7" fill="#9a8ab8" /><ellipse cx="45.3" cy="63.9" rx="1.7" ry="0.8" fill="#9a8ab8" /><ellipse cx="24.0" cy="73.3" rx="1.7" ry="1.2" fill="#6a5a7a" /><ellipse cx="29.4" cy="67.6" rx="0.8" ry="0.6" fill="#9a8ab8" /><ellipse cx="35.1" cy="63.5" rx="1.0" ry="1.0" fill="#d8d4e8" /><ellipse cx="34.8" cy="61.1" rx="0.8" ry="0.7" fill="#9a8ab8" /><ellipse cx="22.0" cy="60.6" rx="0.8" ry="0.6" fill="#d8d4e8" /><ellipse cx="42.4" cy="71.3" rx="0.9" ry="1.0" fill="#f0f0f4" /><ellipse cx="13.6" cy="75.2" rx="1.3" ry="1.0" fill="#6a5a7a" /><ellipse cx="8.2" cy="61.7" rx="0.9" ry="0.6" fill="#d8d4e8" /><ellipse cx="49.9" cy="69.4" rx="1.1" ry="0.7" fill="#d8d4e8" /><ellipse cx="47.9" cy="69.6" rx="1.1" ry="0.8" fill="#f0f0f4" /><path d="M28.0 80.0 L46.0 74.0 L60.0 78.0 L62.0 92.0 L48.0 100.0 L34.0 98.0 L26.0 90.0z" fill="#e9eaee" /><path d="M22.0 92.0 L40.0 96.0 L48.0 104.0 L30.0 106.0 L20.0 100.0z" fill="#dfe2e8" /><path d="M30.0 88.0 L52.0 90.0 L50.0 95.0 L28.0 94.0z" fill="#3a3638" /><path d="M0.0 72.0 L12.0 73.0 L24.0 82.0 L33.0 94.0 L35.0 108.0 L33.0 124.0 L0.0 128.0z" fill="#e6e8ea" /><path d="M0.0 74.0 L10.0 75.0 L20.0 84.0 L24.0 90.0 L0.0 90.0z" fill="#f6f7f8" /><path d="M0.0 88.0 L10.0 89.0 L12.0 96.0 L0.0 97.0z" fill="#2a2c32" /><path d="M15.0 94.0 L28.0 92.0 L31.0 99.0 L18.0 101.0z" fill="#b82a48" /><path d="M0.0 110.0 L34.0 106.0 L34.0 124.0 L0.0 128.0z" fill="#c4c8cc" /><ellipse cx="19.0" cy="124.0" rx="10.5" ry="10.5" fill="#2e2e32" /><ellipse cx="19.0" cy="124.0" rx="6.6" ry="6.6" fill="#a4a8ac" /><ellipse cx="19.0" cy="124.0" rx="2.0" ry="2.0" fill="#555" /><path d="M62.0 42.0 L94.0 52.0 L94.0 100.0 L62.0 80.0z" fill="#605e5e" opacity=".85"/><path d="M62.0 44.0 L94.0 56.0" fill="none" stroke="#96989a" stroke-width="0.6" /><path d="M62.0 49.2 L94.0 61.2" fill="none" stroke="#96989a" stroke-width="0.6" /><path d="M62.0 54.4 L94.0 66.4" fill="none" stroke="#96989a" stroke-width="0.6" /><path d="M62.0 59.6 L94.0 71.6" fill="none" stroke="#96989a" stroke-width="0.6" /><path d="M62.0 64.8 L94.0 76.8" fill="none" stroke="#96989a" stroke-width="0.6" /><path d="M62.0 70.0 L94.0 82.0" fill="none" stroke="#96989a" stroke-width="0.6" /><path d="M62.0 75.2 L94.0 87.2" fill="none" stroke="#96989a" stroke-width="0.6" /><path d="M62.0 80.4 L94.0 92.4" fill="none" stroke="#96989a" stroke-width="0.6" /><path d="M62.0 85.6 L94.0 97.6" fill="none" stroke="#96989a" stroke-width="0.6" /><path d="M64.0 42.6 L64.0 81.2" fill="none" stroke="#8c8e90" stroke-width="0.5" /><path d="M68.6 44.0 L68.6 84.1" fill="none" stroke="#8c8e90" stroke-width="0.5" /><path d="M73.2 45.4 L73.2 86.9" fill="none" stroke="#8c8e90" stroke-width="0.5" /><path d="M77.8 46.7 L77.8 89.8" fill="none" stroke="#8c8e90" stroke-width="0.5" /><path d="M82.4 48.1 L82.4 92.6" fill="none" stroke="#8c8e90" stroke-width="0.5" /><path d="M87.0 49.5 L87.0 95.5" fill="none" stroke="#8c8e90" stroke-width="0.5" /><path d="M91.6 50.9 L91.6 98.4" fill="none" stroke="#8c8e90" stroke-width="0.5" /><path d="M95.0 58.0 L140.0 52.0 L188.0 58.0 L190.0 104.0 L150.0 106.0 L96.0 104.0z" fill="#38363b" /><path d="M66.0 84.0 L96.0 96.0 L96.0 112.0 L70.0 112.0 L60.0 100.0z" fill="#38363a" /><ellipse cx="97.9" cy="60.7" rx="1.2" ry="1.2" fill="#ffffff" /><ellipse cx="179.8" cy="74.0" rx="1.6" ry="1.0" fill="#ffffff" /><ellipse cx="152.9" cy="54.8" rx="1.4" ry="0.9" fill="#e8e8f0" /><ellipse cx="127.9" cy="72.3" rx="1.6" ry="0.8" fill="#e8e8f0" /><ellipse cx="148.9" cy="61.5" rx="1.4" ry="1.0" fill="#ffffff" /><ellipse cx="166.1" cy="79.4" rx="0.8" ry="1.0" fill="#8a80a8" /><ellipse cx="160.0" cy="75.5" rx="2.2" ry="1.1" fill="#d0d0d8" /><ellipse cx="120.0" cy="78.5" rx="1.2" ry="0.8" fill="#b8b0d0" /><ellipse cx="141.8" cy="56.9" rx="1.7" ry="0.7" fill="#d0d0d8" /><ellipse cx="168.4" cy="70.3" rx="1.3" ry="0.9" fill="#8a80a8" /><ellipse cx="178.0" cy="73.4" rx="1.4" ry="1.1" fill="#ffffff" /><ellipse cx="115.0" cy="60.8" rx="2.1" ry="1.0" fill="#8a80a8" /><ellipse cx="186.4" cy="70.4" rx="2.1" ry="0.7" fill="#d0d0d8" /><ellipse cx="165.4" cy="73.6" rx="1.7" ry="0.9" fill="#ffffff" /><ellipse cx="144.0" cy="76.6" rx="1.4" ry="1.0" fill="#ffffff" /><ellipse cx="111.6" cy="65.4" rx="1.9" ry="1.1" fill="#b8b0d0" /><ellipse cx="126.7" cy="70.7" rx="1.8" ry="1.0" fill="#ffffff" /><ellipse cx="123.7" cy="72.3" rx="2.0" ry="0.7" fill="#b8b0d0" /><ellipse cx="185.7" cy="72.8" rx="1.6" ry="0.9" fill="#b8b0d0" /><ellipse cx="126.2" cy="58.9" rx="2.2" ry="1.2" fill="#e8e8f0" /><ellipse cx="111.1" cy="71.1" rx="1.1" ry="0.7" fill="#b8b0d0" /><ellipse cx="169.1" cy="73.1" rx="1.4" ry="0.8" fill="#e8e8f0" /><ellipse cx="121.8" cy="77.0" rx="1.4" ry="0.6" fill="#8a80a8" /><ellipse cx="159.8" cy="67.0" rx="1.7" ry="1.0" fill="#b8b0d0" /><ellipse cx="119.7" cy="73.2" rx="0.8" ry="0.8" fill="#8a80a8" /><ellipse cx="160.5" cy="69.3" rx="1.7" ry="1.3" fill="#d0d0d8" /><ellipse cx="174.4" cy="71.7" rx="1.7" ry="1.0" fill="#ffffff" /><ellipse cx="119.9" cy="72.2" rx="2.1" ry="0.8" fill="#8a80a8" /><ellipse cx="161.6" cy="70.4" rx="1.2" ry="0.9" fill="#8a80a8" /><ellipse cx="97.8" cy="76.3" rx="1.5" ry="1.1" fill="#b8b0d0" /><ellipse cx="178.3" cy="62.5" rx="0.8" ry="1.3" fill="#e8e8f0" /><ellipse cx="99.5" cy="68.1" rx="1.0" ry="1.2" fill="#b8b0d0" /><ellipse cx="143.8" cy="56.6" rx="1.6" ry="1.0" fill="#8a80a8" /><ellipse cx="143.1" cy="70.6" rx="2.0" ry="1.0" fill="#8a80a8" /><ellipse cx="164.3" cy="65.9" rx="2.2" ry="0.7" fill="#d0d0d8" /><ellipse cx="166.2" cy="57.2" rx="2.2" ry="0.9" fill="#e8e8f0" /><ellipse cx="119.2" cy="63.9" rx="0.9" ry="0.7" fill="#8a80a8" /><ellipse cx="153.8" cy="71.5" rx="1.6" ry="0.7" fill="#ffffff" /><ellipse cx="164.2" cy="78.4" rx="1.5" ry="0.8" fill="#8a80a8" /><ellipse cx="138.5" cy="58.3" rx="2.1" ry="0.7" fill="#b8b0d0" /><ellipse cx="83.0" cy="106.0" rx="7.5" ry="7.9" fill="none" stroke="#1c1c20" stroke-width="1.6"/><ellipse cx="83.0" cy="106.0" rx="5.9" ry="6.3" fill="none" stroke="#77777c" stroke-width=".6"/><ellipse cx="108.0" cy="94.0" rx="7.0" ry="7.4" fill="none" stroke="#1c1c20" stroke-width="1.6"/><ellipse cx="108.0" cy="94.0" rx="5.4" ry="5.8" fill="none" stroke="#77777c" stroke-width=".6"/><ellipse cx="128.0" cy="90.0" rx="6.5" ry="6.8" fill="none" stroke="#1c1c20" stroke-width="1.6"/><ellipse cx="128.0" cy="90.0" rx="4.9" ry="5.2" fill="none" stroke="#77777c" stroke-width=".6"/><ellipse cx="146.0" cy="93.0" rx="8.0" ry="8.4" fill="none" stroke="#1c1c20" stroke-width="1.6"/><ellipse cx="146.0" cy="93.0" rx="6.4" ry="6.8" fill="none" stroke="#77777c" stroke-width=".6"/><ellipse cx="175.0" cy="96.0" rx="8.0" ry="8.4" fill="none" stroke="#1c1c20" stroke-width="1.6"/><ellipse cx="175.0" cy="96.0" rx="6.4" ry="6.8" fill="none" stroke="#77777c" stroke-width=".6"/><ellipse cx="60.0" cy="100.0" rx="6.0" ry="6.3" fill="none" stroke="#1c1c20" stroke-width="1.6"/><ellipse cx="60.0" cy="100.0" rx="4.4" ry="4.7" fill="none" stroke="#77777c" stroke-width=".6"/><ellipse cx="98.0" cy="104.0" rx="6.0" ry="6.3" fill="none" stroke="#1c1c20" stroke-width="1.6"/><ellipse cx="98.0" cy="104.0" rx="4.4" ry="4.7" fill="none" stroke="#77777c" stroke-width=".6"/><path d="M134.0 88.0 L139.0 76.0 L146.0 86.0 L136.0 88.0" fill="none" stroke="#f0eee8" stroke-width="1.4" /><path d="M120.0 78.0 L132.0 70.0 L140.0 74.0" fill="none" stroke="#e8e8ea" stroke-width="1.1" /><path d="M52.0 98.0 L64.0 80.0 L70.0 94.0 L58.0 100.0" fill="none" stroke="#6cd030" stroke-width="2" /><path d="M56.0 104.0 L66.0 88.0" fill="none" stroke="#58b828" stroke-width="1.8" /><path d="M60.0 106.0 L70.0 94.0 L66.0 104.0" fill="none" stroke="#7ada3c" stroke-width="1.6" /><path d="M60.6 20.6 L89.8 0.0 L141.0 0.0 L94.6 35.7z" fill="#8d9aa6" /><path d="M64.0 19.0 L88.0 1.0 L108.0 0.0 L78.0 24.0z" fill="#e6e6e0" opacity=".9"/><path d="M96.0 0.0 L120.0 0.0 L84.0 28.0 L78.0 25.0z" fill="#a9b4bc" /><path d="M100.0 0.0 L70.0 26.0" fill="none" stroke="#4e5a62" stroke-width="0.9" /><path d="M112.0 0.0 L79.0 29.0" fill="none" stroke="#4e5a62" stroke-width="0.9" /><path d="M125.0 0.0 L87.0 32.0" fill="none" stroke="#4e5a62" stroke-width="0.9" /><path d="M61.0 21.0 L95.0 35.0" fill="none" stroke="#5d6a70" stroke-width="1.8" /><path d="M128.0 6.5 L142.0 0.0 L184.5 30.0 L181.0 33.0 L134.5 15.0z" fill="#4f5b59" /><path d="M142.0 0.0 L184.5 30.0" fill="none" stroke="#7f8d90" stroke-width="1.2" /><path d="M95.0 35.0 L140.0 1.0" fill="none" stroke="#5a676e" stroke-width="1.6" /><path d="M61.8 22.0 L61.8 76.0" fill="none" stroke="#68767c" stroke-width="1.5" /><path d="M71.0 27.0 L71.0 82.0" fill="none" stroke="#68767c" stroke-width="1.4" /><path d="M81.5 32.0 L81.5 90.0" fill="none" stroke="#68767c" stroke-width="1.4" /><path d="M94.6 35.0 L94.6 116.0" fill="none" stroke="#68767c" stroke-width="2" /><path d="M104.0 32.0 L104.0 64.0" fill="none" stroke="#68767c" stroke-width="1.2" /><path d="M138.0 18.0 L138.0 62.0" fill="none" stroke="#68767c" stroke-width="1.3" /><path d="M151.0 24.0 L151.0 76.0" fill="none" stroke="#68767c" stroke-width="1.4" /><path d="M165.5 29.0 L165.5 82.0" fill="none" stroke="#68767c" stroke-width="1.4" /><path d="M182.4 31.0 L182.4 88.0" fill="none" stroke="#68767c" stroke-width="1.8" /><path d="M158.0 34.5 L224.0 32.0 L241.5 37.6 L240.0 41.2 L160.0 44.4z" fill="#4b3032" /><path d="M160.0 44.4 L240.0 41.2 L241.5 64.0 L160.0 76.0z" fill="#4f4943" /><path d="M163.0 44.5 L163.0 74.6" fill="none" stroke="#3e3834" stroke-width="0.8" /><path d="M168.6 44.3 L168.6 73.8" fill="none" stroke="#3e3834" stroke-width="0.8" /><path d="M174.2 44.0 L174.2 73.0" fill="none" stroke="#3e3834" stroke-width="0.8" /><path d="M179.8 43.8 L179.8 72.2" fill="none" stroke="#3e3834" stroke-width="0.8" /><path d="M185.4 43.6 L185.4 71.4" fill="none" stroke="#3e3834" stroke-width="0.8" /><path d="M191.0 43.4 L191.0 70.7" fill="none" stroke="#3e3834" stroke-width="0.8" /><path d="M196.6 43.1 L196.6 69.9" fill="none" stroke="#3e3834" stroke-width="0.8" /><path d="M202.2 42.9 L202.2 69.1" fill="none" stroke="#3e3834" stroke-width="0.8" /><path d="M207.8 42.7 L207.8 68.3" fill="none" stroke="#3e3834" stroke-width="0.8" /><path d="M213.4 42.5 L213.4 67.5" fill="none" stroke="#3e3834" stroke-width="0.8" /><path d="M219.0 42.2 L219.0 66.7" fill="none" stroke="#3e3834" stroke-width="0.8" /><path d="M224.6 42.0 L224.6 66.0" fill="none" stroke="#3e3834" stroke-width="0.8" /><path d="M230.2 41.8 L230.2 65.2" fill="none" stroke="#3e3834" stroke-width="0.8" /><path d="M235.8 41.6 L235.8 64.4" fill="none" stroke="#3e3834" stroke-width="0.8" /><rect x="199.0" y="66.0" width="3.0" height="5.0" fill="#e8e8e8" /><path d="M160.0 44.0 L182.0 40.0 L182.0 84.0 L160.0 78.0z" fill="#6d675f" opacity=".75"/><path d="M186.0 66.0 L215.0 60.0 L250.0 62.0 L280.0 72.0 L290.0 86.0 L284.0 98.0 L250.0 102.0 L205.0 106.0 L186.0 100.0z" fill="#35333a" /><ellipse cx="200.0" cy="97.0" rx="8.0" ry="8.8" fill="none" stroke="#17171b" stroke-width="1.7"/><ellipse cx="200.0" cy="97.0" rx="6.2" ry="7.0" fill="#4e4a52" /><ellipse cx="214.0" cy="92.0" rx="7.6" ry="8.4" fill="none" stroke="#17171b" stroke-width="1.7"/><ellipse cx="214.0" cy="92.0" rx="5.8" ry="6.6" fill="#4e4a52" /><ellipse cx="230.0" cy="90.0" rx="7.4" ry="8.1" fill="none" stroke="#17171b" stroke-width="1.7"/><ellipse cx="230.0" cy="90.0" rx="5.6" ry="6.3" fill="#4e4a52" /><ellipse cx="246.0" cy="88.0" rx="7.2" ry="7.9" fill="none" stroke="#17171b" stroke-width="1.7"/><ellipse cx="246.0" cy="88.0" rx="5.4" ry="6.1" fill="#4e4a52" /><ellipse cx="262.0" cy="86.0" rx="7.0" ry="7.7" fill="none" stroke="#17171b" stroke-width="1.7"/><ellipse cx="262.0" cy="86.0" rx="5.2" ry="5.9" fill="#4e4a52" /><ellipse cx="276.0" cy="82.0" rx="6.6" ry="7.3" fill="none" stroke="#17171b" stroke-width="1.7"/><ellipse cx="276.0" cy="82.0" rx="4.8" ry="5.5" fill="#4e4a52" /><ellipse cx="286.0" cy="80.0" rx="6.0" ry="6.6" fill="none" stroke="#17171b" stroke-width="1.7"/><ellipse cx="286.0" cy="80.0" rx="4.2" ry="4.8" fill="#4e4a52" /><ellipse cx="196.0" cy="82.0" rx="6.0" ry="6.6" fill="none" stroke="#17171b" stroke-width="1.7"/><ellipse cx="196.0" cy="82.0" rx="4.2" ry="4.8" fill="#4e4a52" /><ellipse cx="235.2" cy="74.4" rx="0.9" ry="1.0" fill="#f4f4f4" /><ellipse cx="253.3" cy="80.3" rx="1.6" ry="0.7" fill="#f4f4f4" /><ellipse cx="261.9" cy="76.3" rx="1.6" ry="0.7" fill="#8a80c0" /><ellipse cx="216.6" cy="70.3" rx="1.0" ry="0.7" fill="#8a80c0" /><ellipse cx="236.3" cy="79.7" rx="1.6" ry="0.7" fill="#f4f4f4" /><ellipse cx="221.5" cy="72.7" rx="1.4" ry="0.5" fill="#f4f4f4" /><ellipse cx="206.1" cy="68.7" rx="1.1" ry="0.5" fill="#c04040" /><ellipse cx="275.3" cy="79.2" rx="0.9" ry="0.9" fill="#c04040" /><ellipse cx="193.4" cy="62.3" rx="1.7" ry="0.8" fill="#f4f4f4" /><ellipse cx="248.0" cy="74.7" rx="1.6" ry="0.6" fill="#6a60a0" /><ellipse cx="223.9" cy="65.4" rx="1.7" ry="0.9" fill="#8a80c0" /><ellipse cx="248.1" cy="77.1" rx="1.8" ry="0.5" fill="#c04040" /><ellipse cx="264.5" cy="80.5" rx="0.9" ry="0.8" fill="#c04040" /><ellipse cx="199.2" cy="80.5" rx="1.4" ry="0.6" fill="#d8d8e0" /><ellipse cx="216.3" cy="67.2" rx="0.9" ry="0.7" fill="#d8d8e0" /><ellipse cx="236.6" cy="81.9" rx="1.5" ry="0.6" fill="#8a80c0" /><ellipse cx="241.6" cy="81.0" rx="0.7" ry="0.9" fill="#6a60a0" /><ellipse cx="256.0" cy="72.9" rx="1.0" ry="0.7" fill="#6a60a0" /><ellipse cx="230.5" cy="83.1" rx="0.8" ry="0.8" fill="#d8d8e0" /><ellipse cx="193.9" cy="63.0" rx="1.5" ry="1.0" fill="#d8d8e0" /><ellipse cx="239.0" cy="72.7" rx="1.7" ry="0.5" fill="#6a60a0" /><ellipse cx="249.5" cy="69.4" rx="1.6" ry="0.7" fill="#6a60a0" /><ellipse cx="263.6" cy="74.2" rx="1.7" ry="0.6" fill="#f4f4f4" /><ellipse cx="230.9" cy="74.2" rx="1.6" ry="0.6" fill="#6a60a0" /><ellipse cx="229.1" cy="73.1" rx="1.0" ry="0.8" fill="#8a80c0" /><ellipse cx="252.2" cy="79.4" rx="1.1" ry="0.7" fill="#f4f4f4" /><ellipse cx="203.7" cy="83.4" rx="0.8" ry="1.0" fill="#6a60a0" /><ellipse cx="258.5" cy="81.5" rx="1.3" ry="0.5" fill="#f4f4f4" /><ellipse cx="202.0" cy="63.0" rx="1.6" ry="0.7" fill="#d8d8e0" /><ellipse cx="264.6" cy="82.0" rx="1.4" ry="0.8" fill="#c04040" /><path d="M175.1 65.0 L168.7 67.1" fill="none" stroke="#8a8a94" stroke-width="0.650680814920439" opacity=".8"/><path d="M114.0 63.3 L117.8 70.0" fill="none" stroke="#c8c8d0" stroke-width="0.7844346593019443" opacity=".8"/><path d="M170.4 90.3 L171.3 86.4" fill="none" stroke="#e8e8ec" stroke-width="0.6923881620980229" opacity=".8"/><path d="M101.0 62.7 L101.9 64.0" fill="none" stroke="#c8c8d0" stroke-width="0.848882537959171" opacity=".8"/><path d="M143.9 91.7 L147.8 90.4" fill="none" stroke="#6a6a74" stroke-width="0.8232358458162057" opacity=".8"/><path d="M99.2 75.9 L100.5 82.9" fill="none" stroke="#8a8a94" stroke-width="0.8377242064844319" opacity=".8"/><path d="M134.3 65.7 L136.3 61.1" fill="none" stroke="#8a8a94" stroke-width="0.9134474941176551" opacity=".8"/><path d="M135.6 62.3 L137.9 70.1" fill="none" stroke="#c8c8d0" stroke-width="0.7091226036457313" opacity=".8"/><path d="M108.7 79.0 L105.5 80.1" fill="none" stroke="#6a6a74" stroke-width="0.966778711766777" opacity=".8"/><path d="M114.5 63.8 L118.3 67.2" fill="none" stroke="#8a8a94" stroke-width="0.9648608876740508" opacity=".8"/><path d="M105.4 84.6 L108.3 84.0" fill="none" stroke="#e8e8ec" stroke-width="1.0567605702739784" opacity=".8"/><path d="M102.6 63.2 L96.5 69.3" fill="none" stroke="#a09ab8" stroke-width="0.6398402861839111" opacity=".8"/><path d="M125.4 88.3 L120.7 94.0" fill="none" stroke="#6a6a74" stroke-width="0.9044741006932371" opacity=".8"/><path d="M125.8 96.2 L129.0 95.7" fill="none" stroke="#8a8a94" stroke-width="0.6724532640217069" opacity=".8"/><path d="M168.2 75.1 L170.2 77.2" fill="none" stroke="#6a6a74" stroke-width="0.8384811207120773" opacity=".8"/><path d="M166.5 78.3 L163.3 82.4" fill="none" stroke="#e8e8ec" stroke-width="0.7461941461261626" opacity=".8"/><path d="M103.3 97.1 L106.2 102.3" fill="none" stroke="#e8e8ec" stroke-width="1.0347791061022247" opacity=".8"/><path d="M161.9 62.6 L157.0 67.9" fill="none" stroke="#a09ab8" stroke-width="0.814280933053745" opacity=".8"/><path d="M176.2 75.6 L178.7 77.2" fill="none" stroke="#8a8a94" stroke-width="1.0037407206418718" opacity=".8"/><path d="M122.9 62.1 L119.6 60.8" fill="none" stroke="#a09ab8" stroke-width="1.0602981202899895" opacity=".8"/><path d="M165.2 90.2 L162.2 84.4" fill="none" stroke="#a09ab8" stroke-width="0.6734995092222418" opacity=".8"/><path d="M183.8 90.7 L184.5 95.1" fill="none" stroke="#6a6a74" stroke-width="0.7734266226535937" opacity=".8"/><path d="M105.5 81.9 L109.6 77.1" fill="none" stroke="#8a8a94" stroke-width="0.754735194917389" opacity=".8"/><path d="M103.1 76.2 L106.0 83.1" fill="none" stroke="#a09ab8" stroke-width="0.9755667880526544" opacity=".8"/><path d="M167.7 78.5 L161.9 83.5" fill="none" stroke="#c8c8d0" stroke-width="0.7164332158795987" opacity=".8"/><path d="M149.0 94.3 L154.4 94.6" fill="none" stroke="#6a6a74" stroke-width="0.8530843413968706" opacity=".8"/><path d="M209.4 70.8 L203.7 75.7" fill="none" stroke="#e8e8ec" stroke-width="0.7814128852556125" opacity=".8"/><path d="M244.2 76.9 L244.4 71.3" fill="none" stroke="#c8c8d0" stroke-width="1.0613090716195912" opacity=".8"/><path d="M237.4 91.7 L235.6 91.1" fill="none" stroke="#c8c8d0" stroke-width="0.6780774739227796" opacity=".8"/><path d="M247.3 75.0 L247.6 67.4" fill="none" stroke="#c8c8d0" stroke-width="0.702321889215725" opacity=".8"/><path d="M273.6 82.1 L274.8 77.5" fill="none" stroke="#e8e8ec" stroke-width="0.8129749920111439" opacity=".8"/><path d="M280.9 88.6 L285.3 96.0" fill="none" stroke="#e8e8ec" stroke-width="1.0218733535627669" opacity=".8"/><path d="M222.5 95.8 L220.8 88.3" fill="none" stroke="#c8c8d0" stroke-width="0.8786901234449196" opacity=".8"/><path d="M273.6 78.7 L279.8 85.2" fill="none" stroke="#c8c8d0" stroke-width="1.0314851187097587" opacity=".8"/><path d="M251.4 93.5 L254.3 86.9" fill="none" stroke="#e8e8ec" stroke-width="0.8822380894169506" opacity=".8"/><path d="M251.5 94.6 L253.9 92.9" fill="none" stroke="#6a6a74" stroke-width="1.0248472122837917" opacity=".8"/><path d="M225.6 71.5 L228.7 66.3" fill="none" stroke="#e8e8ec" stroke-width="1.0705837009549548" opacity=".8"/><path d="M195.7 81.7 L189.1 88.4" fill="none" stroke="#e8e8ec" stroke-width="0.9931866195549603" opacity=".8"/><path d="M258.1 84.7 L264.9 77.6" fill="none" stroke="#8a8a94" stroke-width="0.7588412812164081" opacity=".8"/><path d="M190.6 70.4 L194.0 71.8" fill="none" stroke="#6a6a74" stroke-width="0.9789488995541462" opacity=".8"/><path d="M200.1 74.4 L196.7 68.4" fill="none" stroke="#6a6a74" stroke-width="0.7898230320534749" opacity=".8"/><path d="M232.4 89.8 L238.2 96.1" fill="none" stroke="#6a6a74" stroke-width="0.9586133566222594" opacity=".8"/><path d="M208.7 65.2 L214.7 60.7" fill="none" stroke="#7a70b8" stroke-width="1.0333759783696213" opacity=".8"/><path d="M275.3 68.5 L274.6 62.0" fill="none" stroke="#6a6a74" stroke-width="1.0211246558343476" opacity=".8"/><path d="M250.3 78.5 L248.1 83.6" fill="none" stroke="#6a6a74" stroke-width="0.6578051940656571" opacity=".8"/><path d="M225.1 74.6 L228.4 69.5" fill="none" stroke="#6a6a74" stroke-width="0.8766870442379899" opacity=".8"/><path d="M203.9 91.9 L200.6 90.5" fill="none" stroke="#8a8a94" stroke-width="0.6127100246813414" opacity=".8"/><path d="M244.8 73.5 L249.1 69.7" fill="none" stroke="#c8c8d0" stroke-width="0.759033426851722" opacity=".8"/><path d="M276.7 67.7 L283.4 60.6" fill="none" stroke="#8a8a94" stroke-width="0.8799712437296485" opacity=".8"/><path d="M270.2 67.8 L273.8 75.3" fill="none" stroke="#6a6a74" stroke-width="1.0955104710963472" opacity=".8"/><path d="M285.8 93.6 L280.2 90.2" fill="none" stroke="#8a8a94" stroke-width="0.6287411839974045" opacity=".8"/><path d="M259.7 73.4 L266.4 65.6" fill="none" stroke="#7a70b8" stroke-width="0.770452980364801" opacity=".8"/><path d="M203.5 64.1 L208.1 64.5" fill="none" stroke="#8a8a94" stroke-width="0.7800496035637311" opacity=".8"/><path d="M193.9 77.1 L190.8 72.0" fill="none" stroke="#8a8a94" stroke-width="0.860826367029718" opacity=".8"/><path d="M212.1 69.6 L213.5 74.9" fill="none" stroke="#7a70b8" stroke-width="0.965424683300705" opacity=".8"/><path d="M263.1 69.6 L258.0 72.3" fill="none" stroke="#8a8a94" stroke-width="0.8914665501864417" opacity=".8"/><path d="M233.4 17.7 L233.4 32.0" fill="none" stroke="#76857f" stroke-width="1.2" /><path d="M297.6 19.0 L297.6 43.0" fill="none" stroke="#76857f" stroke-width="1.2" /><path d="M315.3 21.0 L315.3 46.6" fill="none" stroke="#76857f" stroke-width="1.2" /><path d="M233.4 17.7 L262.0 3.0" fill="none" stroke="#76857f" stroke-width="1.1" /><path d="M233.4 18.0 L249.4 19.3 L267.0 22.5 L286.4 24.0 L336.2 22.5" fill="none" stroke="#5e6e68" stroke-width="1.3" /><path d="M249.4 19.3 L300.8 0.0" fill="none" stroke="#5e6e68" stroke-width="1.3" /><path d="M300.8 0.0 L318.5 18.0" fill="none" stroke="#4e5a56" stroke-width="1.4" /><path d="M286.4 24.0 L318.5 0.0" fill="none" stroke="#5e6e68" stroke-width="1.4" /><path d="M318.5 0.0 L337.0 22.5" fill="none" stroke="#4e5a56" stroke-width="1.5" /><path d="M267.0 22.5 L304.0 3.0" fill="none" stroke="#5e6e68" stroke-width="1.1" /><path d="M243.0 46.0 L264.0 45.0 L266.0 64.0 L244.0 64.0z" fill="#2f5a38" /><path d="M277.0 42.5 L303.0 45.0 L303.0 64.0 L279.0 62.0z" fill="#305c39" /><path d="M276.0 41.0 L304.0 43.5 L304.0 48.0 L276.0 46.0z" fill="#4c7c56" /><path d="M267.0 52.0 L294.0 55.0 L292.0 80.0 L268.0 76.0z" fill="#2e5937" /><path d="M266.0 50.5 L295.0 53.5 L295.0 58.0 L266.0 55.0z" fill="#4d7e57" /><path d="M302.0 49.0 L333.0 51.0 L331.0 74.0 L303.0 71.0z" fill="#31603b" /><path d="M301.0 47.5 L334.0 49.5 L334.0 54.5 L301.0 52.5z" fill="#50845a" /><path d="M243.0 44.5 L265.0 43.8 L265.0 48.0 L243.0 48.8z" fill="#4b7a55" /><rect x="309.0" y="58.0" width="12.0" height="5.0" fill="#d8e4d8" opacity=".7"/><ellipse cx="319.0" cy="77.0" rx="1.6" ry="2.0" fill="#1c1c1c" /><ellipse cx="305.0" cy="73.0" rx="1.4" ry="1.8" fill="#1c1c1c" /><path d="M249.4 19.3 L249.4 48.0" fill="none" stroke="#6a7a74" stroke-width="1.5" /><path d="M267.0 22.5 L267.0 62.6" fill="none" stroke="#6a7a74" stroke-width="1.5" /><path d="M286.4 24.0 L286.4 67.5" fill="none" stroke="#6a7a74" stroke-width="1.5" /><path d="M336.2 22.5 L336.2 75.5" fill="none" stroke="#6a7a74" stroke-width="1.5" /><path d="M326.0 48.0 L344.0 52.0 L352.0 66.0 L361.0 80.0 L348.0 82.0 L330.0 78.0 L333.0 62.0z" fill="#ecedf1" /><path d="M300.0 66.0 L304.0 66.0 L304.0 74.0 L299.0 73.0z" fill="#dfe2e8" /><ellipse cx="343.0" cy="64.0" rx="6.6" ry="7.3" fill="none" stroke="#1d1d22" stroke-width="1.4"/><ellipse cx="354.0" cy="68.0" rx="6.2" ry="6.8" fill="none" stroke="#1d1d22" stroke-width="1.4"/><ellipse cx="338.0" cy="58.0" rx="5.0" ry="5.5" fill="none" stroke="#1d1d22" stroke-width="1.4"/><path d="M336.0 52.0 L346.0 50.0 L352.0 62.0" fill="none" stroke="#26262c" stroke-width="1.4" /><path d="M358.0 46.0 L364.0 38.0 L379.0 33.0 L379.0 64.0 L362.0 60.0z" fill="#eceef0" /><path d="M366.0 42.0 L379.0 37.0 L379.0 44.0 L368.0 47.0z" fill="#6a7484" /><path d="M362.0 54.0 L379.0 57.0 L379.0 63.0 L362.0 60.0z" fill="#c8ccd2" /><path d="M92.0 108.0 L100.0 105.0 L110.0 110.0 L108.0 116.0 L93.0 116.0z" fill="#dcdfe6" /><path d="M66.0 108.0 L76.0 110.0 L74.0 115.0 L64.0 113.0z" fill="#cfd2da" /></g><g filter="url(#bl)"><path d="M231.0 214.0 L379.0 160.5 L379.0 214.0z" fill="#303b40" /><path d="M231.0 214.5 L379.0 161.0" fill="none" stroke="#4c5b60" stroke-width="2.4" /><path d="M262.0 214.0 L379.0 176.0 L379.0 184.0 L285.0 214.0z" fill="#33413f" opacity=".0"/><path d="M286.0 214.0 L379.0 183.0 L379.0 214.0z" fill="#20262a" /><path d="M262.0 214.0 L379.0 175.5" fill="none" stroke="#3c4a4f" stroke-width="1.4" /><ellipse cx="205.0" cy="206.0" rx="29.5" ry="32.0" fill="#3e4a50" /><ellipse cx="198.0" cy="196.0" rx="14.0" ry="12.0" fill="#55646a" opacity=".4"/><path d="M213.0 198.0 L238.0 172.0 L258.0 186.0 L236.0 214.0 L222.0 214.0z" fill="#323c42" /><ellipse cx="248.5" cy="179.5" rx="12.0" ry="10.5" fill="#434e54" transform="rotate(33 248.5 179.5)"/><path d="M222.0 205.0 L230.0 196.0 L246.0 206.0 L240.0 214.0 L224.0 214.0z" fill="#2b353b" /><ellipse cx="265.0" cy="201.0" rx="1.2" ry="1.2" fill="#e8f0f0" /><path d="M36.0 214.0 L40.0 206.0 L47.0 201.0 L72.0 190.5 L112.0 183.3 L128.0 182.4 L137.0 188.0 L160.0 201.0 L175.0 209.5 L177.0 214.0z" fill="#1c1e22" /><path d="M62.0 214.0 L70.0 203.0 L100.0 194.0 L136.0 193.0 L160.0 203.0 L170.0 214.0z" fill="#2c2d2e" /><path d="M84.0 214.0 L96.0 203.0 L126.0 200.0 L150.0 206.0 L160.0 214.0z" fill="#1b1d21" /><path d="M52.0 204.0 L90.0 193.0 L126.0 188.0" fill="none" stroke="#8a8e94" stroke-width="1.2" opacity=".7"/><path d="M76.0 208.0 L110.0 200.0 L146.0 200.0" fill="none" stroke="#a09a80" stroke-width="1.1" opacity=".6"/><path d="M60.0 212.0 L84.0 205.0" fill="none" stroke="#b8bcc2" stroke-width="1" opacity=".6"/><path d="M40.0 213.0 L46.0 203.0" fill="none" stroke="#c8ccd0" stroke-width="1.4" /><path d="M92.0 192.0 L134.0 186.5" fill="none" stroke="#4c4e55" stroke-width="2.2" /><path d="M70.0 206.0 L150.0 198.0" fill="none" stroke="#77705a" stroke-width="1.4" opacity=".6"/><path d="M150.0 203.5 L160.0 202.0 L171.0 208.0 L176.0 214.0 L150.0 214.0z" fill="#1e2026" /><path d="M150.0 207.0 L162.0 206.0 L170.0 214.0 L150.0 214.0z" fill="#aab6c8" /><path d="M243.0 196.0 L254.0 194.0 L257.0 206.0 L246.0 208.0z" fill="#5b676d" /></g><rect width="379" height="213.6" filter="url(#nz)" opacity=".15"/></g></svg>
<svg id="ov" width="1183" height="887" viewBox="0 0 1183 887"><g fill="none" stroke="#F7941D" stroke-width="5.8" stroke-linejoin="round"><rect x="210" y="128" width="97.80" height="16.80" rx="1.6" ry="1.6"/><rect x="210" y="150.8" width="196.10" height="680.00" rx="0.3" ry="0.3"/><rect x="418" y="153" width="368.00" height="421.00" rx="0.3" ry="0.3"/><rect x="795" y="156" width="385.30" height="418.00" rx="0.3" ry="0.3"/><rect x="418.5" y="587.9" width="760.50" height="244.00" rx="0.3" ry="0.3"/><path d="M70.5 42 L292.4 110.1" stroke-width="5.6"/><path d="M70.5 128 L210 137.5" stroke-width="5.6"/><path d="M70.8 343.7 L242.4 316.7" stroke-width="5.6"/><path d="M70.8 434 L475 361.3" stroke-width="5.6"/><path d="M70.5 847 L619 769.8" stroke-width="5.6"/><path d="M839.2 71.3 L892.2 279.3" stroke-width="5.6"/><path d="M1146.7 71 L1004.6 569" stroke-width="5.6"/></g><g fill="#fff" stroke="#F7941D" stroke-width="5.8" stroke-linejoin="round"><rect x="2.6" y="2.9" width="65.40" height="66.00" rx="0.3" ry="0.3"/><rect x="2.6" y="97.9" width="65.40" height="66.10" rx="0.3" ry="0.3"/><rect x="2.6" y="310.4" width="65.40" height="65.50" rx="0.3" ry="0.3"/><rect x="2.6" y="406.8" width="65.40" height="64.90" rx="0.3" ry="0.3"/><rect x="2.6" y="814" width="64.80" height="64.80" rx="0.3" ry="0.3"/><rect x="786.2" y="2.9" width="67.60" height="65.80" rx="0.3" ry="0.3"/><rect x="1113" y="2.9" width="67.40" height="65.80" rx="0.3" ry="0.3"/></g></svg>
<div class="num" style="left:13.2px;top:19.4px;width:40px;text-align:center">1</div>
<div class="num" style="left:13.9px;top:115.2px;width:40px;text-align:center">2</div>
<div class="num" style="left:13.0px;top:326.9px;width:40px;text-align:center">3</div>
<div class="num" style="left:12.7px;top:423.3px;width:40px;text-align:center">4</div>
<div class="num" style="left:15.3px;top:830.4px;width:40px;text-align:center">5</div>
<div class="num" style="left:797.5px;top:20.0px;width:40px;text-align:center">6</div>
<div class="num" style="left:1123.9px;top:18.9px;width:40px;text-align:center">7</div>
</body></html>
